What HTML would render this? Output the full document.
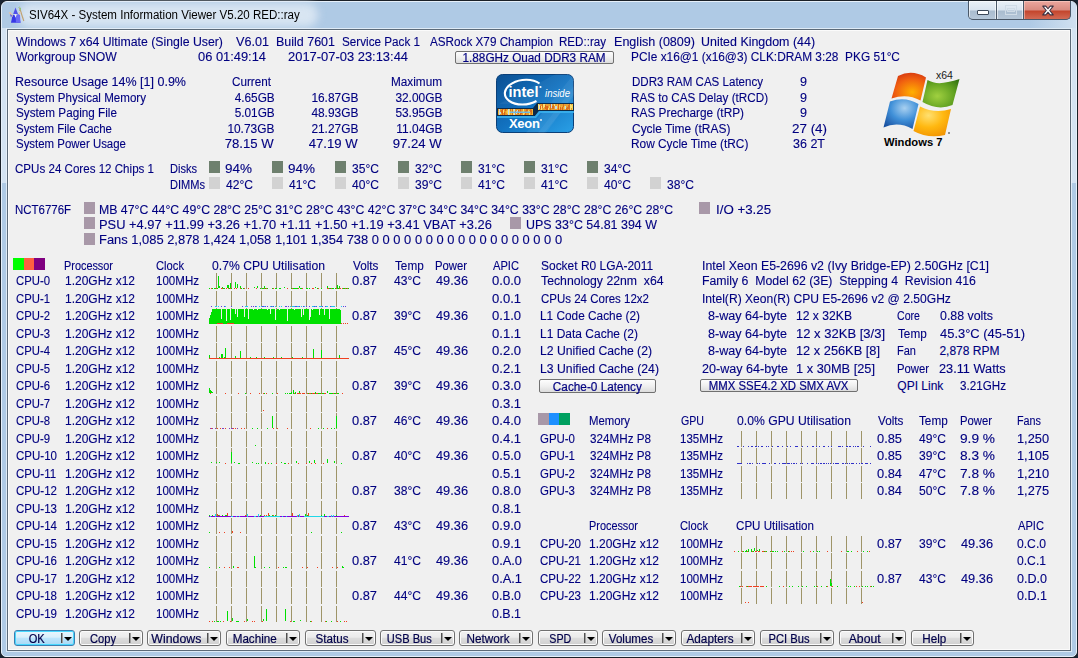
<!DOCTYPE html><html><head><meta charset="utf-8"><style>
*{margin:0;padding:0;box-sizing:border-box}
html,body{width:1078px;height:658px;overflow:hidden;background:#1a2432}
body{position:relative;font-family:"Liberation Sans",sans-serif}
.win{position:absolute;left:0;top:0;width:1078px;height:658px;border-radius:7px 7px 6px 6px;background:#1a2028}
.frame{position:absolute;left:1px;top:1px;width:1076px;height:656px;border-radius:6px 6px 5px 5px;background:#afcae5;border:1px solid #e6f0fa}
.rgl{position:absolute;left:1030px;top:2px;width:46px;height:26px;border-top-right-radius:5px;background:linear-gradient(90deg,rgba(210,226,242,0),#d0e0f0)}
.glow{position:absolute;left:18px;top:3px;width:300px;height:24px;border-radius:12px;background:#d8e5f2;filter:blur(4px)}
.title{position:absolute;left:29px;top:8px;transform:scaleX(0.963);transform-origin:0 0;font:12px/14px "Liberation Sans",sans-serif;color:#000;white-space:pre}
.panel{position:absolute;left:7px;top:29px;width:1064px;height:622px;border:1px solid #5c6a78;background:#f0f0f0;box-shadow:0 0 0 1px rgba(235,243,250,.8)}
.panel:before{content:"";position:absolute;left:0;top:0;right:0;bottom:0;border:1px solid #fbfbfb;border-right-color:#f8f8f8}
.t{position:absolute;font:12px/14px "Liberation Sans",sans-serif;color:#000080;-webkit-text-stroke:0.12px #000080;white-space:pre;transform-origin:0 0}
.bx{position:absolute;width:11px;height:12px}
.btn{position:absolute;top:630px;height:16px;border:1px solid #707070;border-radius:3px;
 background:linear-gradient(#f2f2f2 0,#ebebeb 45%,#dddddd 50%,#cfcfcf 100%);box-shadow:inset 0 0 0 1px #fcfcfc}
.btn.ok{border-color:#3c7fb1;background:linear-gradient(#eaf6fd 0,#d9f0fc 45%,#bee6fd 50%,#a7d9f5 100%);box-shadow:inset 0 0 0 1px #48d8ff}
.bl{position:absolute;left:0;top:1px;height:14px;text-align:center;font:12px/15px "Liberation Sans",sans-serif;color:#00004a;-webkit-text-stroke:0.2px #00004a;white-space:pre}
.sep{position:absolute;right:12px;top:2px;width:1px;height:10px;background:#505050;box-shadow:1px 0 0 #a0a0a0}
.tri{position:absolute;right:2px;top:6px;width:0;height:0;border-left:4px solid transparent;border-right:4px solid transparent;border-top:4px solid #000}
.pb{position:absolute;border:1px solid #707070;border-radius:2px;background:linear-gradient(#fdfdfd 0,#f0f0f0 50%,#dcdcdc 100%);
 text-align:center;font-family:"Liberation Sans",sans-serif;font-size:12px;color:#000080;-webkit-text-stroke:0.2px #000080;white-space:pre}
.wb{position:absolute;top:0;height:20px}
</style></head><body>
<div class="win"><div class="frame"></div></div>
<div style="position:absolute;left:2px;top:28px;width:5px;height:155px;background:#d4e3f2"></div>
<div style="position:absolute;left:1071px;top:28px;width:5px;height:155px;background:#d4e3f2"></div>
<div class="rgl"></div><div class="glow"></div>
<div class="title">SIV64X - System Information Viewer V5.20 RED::ray</div>
<div class="panel"></div>
<!-- window buttons -->
<div style="position:absolute;left:968px;top:1px;width:103px;height:19px;border:1px solid #4a5868;border-top:none;border-radius:0 0 5px 5px;overflow:hidden;background:#4a5868">
 <div style="position:absolute;left:0;top:0;width:27px;height:20px;border-radius:0 0 0 4px;background:linear-gradient(#e9f0f7 0,#d9e4ef 45%,#a9bccf 50%,#b9cadb 100%);box-shadow:inset 0 0 0 1px rgba(255,255,255,.6)"></div>
 <div style="position:absolute;left:28px;top:0;width:26px;height:20px;background:linear-gradient(#e9f0f7 0,#d9e4ef 45%,#a9bccf 50%,#b9cadb 100%);box-shadow:inset 0 0 0 1px rgba(255,255,255,.6)"></div>
 <div style="position:absolute;left:55px;top:0;width:47px;height:20px;border-radius:0 0 4px 0;background:linear-gradient(#eba79e 0,#d98b80 45%,#c3452c 50%,#d6735f 100%);box-shadow:inset 0 0 0 1px rgba(255,220,210,.5)"></div>
</div>
<div style="position:absolute;left:977px;top:10px;width:12px;height:5px;background:#fff;border:1px solid #3c4858;border-radius:1px"></div>
<div style="position:absolute;left:1005px;top:5px;width:12px;height:10px;border:1px solid #cfdbe6;background:transparent"></div>
<div style="position:absolute;left:1007px;top:8px;width:8px;height:4px;border:1px solid #cfdbe6"></div>
<svg style="position:absolute;left:1041px;top:4.5px" width="14" height="11" viewBox="0 0 16 12">
 <path d="M2 1 L5.5 1 L8 4 L10.5 1 L14 1 L10 6 L14 11 L10.5 11 L8 8 L5.5 11 L2 11 L6 6 Z" fill="#fff" stroke="#3a3040" stroke-width="1.2" stroke-linejoin="round"/>
</svg>
<!-- wizard icon -->
<svg style="position:absolute;left:0;top:0" width="30" height="30" viewBox="0 0 30 30">
 <path d="M19.6 8 L23.8 21" stroke="#c0a070" stroke-width="1.1"/>
 <path d="M18.5 7.5 Q19.5 6.5 20.5 8 Q20.5 10 19.5 11" stroke="#90c878" stroke-width="1" fill="none"/>
 <path d="M15.5 7.5 L13.2 14 L18 14 Z" fill="#5050e8"/>
 <path d="M12.5 15 L19 14.5 L20.5 22.8 L11 22.8 Z" fill="#3838e6"/>
 <path d="M15.5 15 L20 14.5 L20.5 22.8 L16 22.8 Z" fill="#6868f4"/>
 <path d="M14.2 14.2 L16.8 14.2 L15.5 17.8 Z" fill="#f4f4f4"/>
 <path d="M8.5 12.5 L10.5 12 L13 16 L12 17 Z" fill="#e2c2a8"/>
 <path d="M12 15.5 L10 14 L11 17.5 Z" fill="#5050e8"/>
 <path d="M18.5 13 L20 11.5 L20.8 12.5 L19.5 15 Z" fill="#e2c2a8"/>
</svg>
<!-- intel logo -->
<svg style="position:absolute;left:496px;top:74px" width="78" height="59" viewBox="0 0 78 59">
 <defs>
  <linearGradient id="ig" x1="0" y1="0" x2="1" y2="1">
   <stop offset="0" stop-color="#0b4f92"/><stop offset="0.5" stop-color="#1272c0"/><stop offset="1" stop-color="#2aa0e6"/>
  </linearGradient>
 </defs>
 <rect x="0.5" y="0.5" width="77" height="58" rx="6" fill="url(#ig)" stroke="#0a3f78"/>
 <path d="M3 30 L78 30 L78 0 L60 0 Z" fill="#ffffff" opacity="0.05"/>
 <path d="M78 0 L30 59 L50 59 L78 20 Z" fill="#ffffff" opacity="0.06"/>
 <path d="M78 12 L42 59 L48 59 L78 22 Z" fill="#ffffff" opacity="0.05"/>
 <path d="M43.5 9.5 A19.5 12.3 -6 1 0 40.5 27" fill="none" stroke="#fff" stroke-width="2.1"/>
 <text x="12.5" y="22.7" font-family="Liberation Sans" font-weight="bold" font-size="14" fill="#fff" textLength="30" lengthAdjust="spacingAndGlyphs">intel</text>
 <circle cx="44.5" cy="13" r="1.1" fill="#fff"/>
 <text x="49" y="22.7" font-family="Liberation Sans" font-style="italic" font-size="10.5" fill="#fff" textLength="25" lengthAdjust="spacingAndGlyphs">inside</text>
 <path d="M1 34 L37 34 L41 29 L78 29 L78 37 L43 37 L39 42 L1 42 Z" fill="#0c2a48"/>
 <path d="M2 35 L37 35 L37 41 L2 41 Z" fill="#e89a28"/>
 <path d="M42 30 L77 30 L77 36 L42 36 Z" fill="#e8a030"/>
 <rect x="2" y="37" width="1" height="3" fill="#f0b838"/>
 <rect x="3" y="35" width="1" height="6" fill="#c8d8e0"/>
 <rect x="4" y="38" width="1" height="2" fill="#c8d8e0"/>
 <rect x="5" y="36" width="1" height="3" fill="#d87020"/>
 <rect x="6" y="35" width="1" height="6" fill="#e06018"/>
 <rect x="7" y="36" width="1" height="3" fill="#f8e070"/>
 <rect x="8" y="38" width="1" height="3" fill="#e06018"/>
 <rect x="9" y="35" width="1" height="2" fill="#e06018"/>
 <rect x="10" y="37" width="1" height="2" fill="#f0b838"/>
 <rect x="11" y="36" width="1" height="4" fill="#f8d050"/>
 <rect x="12" y="35" width="1" height="6" fill="#c8d8e0"/>
 <rect x="13" y="35" width="1" height="6" fill="#f8e070"/>
 <rect x="14" y="35" width="1" height="2" fill="#d87020"/>
 <rect x="15" y="35" width="1" height="6" fill="#f0b838"/>
 <rect x="16" y="35" width="1" height="6" fill="#d87020"/>
 <rect x="17" y="35" width="1" height="6" fill="#f8e070"/>
 <rect x="18" y="35" width="1" height="6" fill="#c8d8e0"/>
 <rect x="19" y="37" width="1" height="2" fill="#d87020"/>
 <rect x="20" y="37" width="1" height="3" fill="#c8d8e0"/>
 <rect x="21" y="36" width="1" height="2" fill="#c8d8e0"/>
 <rect x="22" y="36" width="1" height="4" fill="#e06018"/>
 <rect x="23" y="38" width="1" height="2" fill="#f8d050"/>
 <rect x="24" y="35" width="1" height="6" fill="#e06018"/>
 <rect x="25" y="38" width="1" height="2" fill="#d87020"/>
 <rect x="26" y="37" width="1" height="2" fill="#f0b838"/>
 <rect x="27" y="35" width="1" height="6" fill="#f8e070"/>
 <rect x="28" y="38" width="1" height="2" fill="#f8d050"/>
 <rect x="29" y="37" width="1" height="4" fill="#e06018"/>
 <rect x="30" y="35" width="1" height="3" fill="#d87020"/>
 <rect x="31" y="35" width="1" height="2" fill="#d87020"/>
 <rect x="32" y="36" width="1" height="2" fill="#f8d050"/>
 <rect x="33" y="37" width="1" height="4" fill="#f8e070"/>
 <rect x="34" y="35" width="1" height="3" fill="#d87020"/>
 <rect x="35" y="36" width="1" height="4" fill="#d87020"/>
 <rect x="36" y="35" width="1" height="6" fill="#f0b838"/>
 <rect x="42" y="30" width="1" height="6" fill="#f8e070"/>
 <rect x="43" y="31" width="1" height="4" fill="#c8d8e0"/>
 <rect x="44" y="32" width="1" height="3" fill="#e06018"/>
 <rect x="45" y="32" width="1" height="4" fill="#f8e070"/>
 <rect x="46" y="30" width="1" height="4" fill="#d87020"/>
 <rect x="47" y="30" width="1" height="4" fill="#f8e070"/>
 <rect x="48" y="30" width="1" height="3" fill="#f8e070"/>
 <rect x="49" y="31" width="1" height="4" fill="#e06018"/>
 <rect x="50" y="32" width="1" height="4" fill="#d87020"/>
 <rect x="51" y="32" width="1" height="4" fill="#e06018"/>
 <rect x="52" y="34" width="1" height="2" fill="#f8e070"/>
 <rect x="53" y="32" width="1" height="2" fill="#f8d050"/>
 <rect x="54" y="30" width="1" height="6" fill="#d87020"/>
 <rect x="55" y="30" width="1" height="4" fill="#c8d8e0"/>
 <rect x="56" y="32" width="1" height="3" fill="#d87020"/>
 <rect x="57" y="31" width="1" height="4" fill="#d87020"/>
 <rect x="58" y="30" width="1" height="2" fill="#f8e070"/>
 <rect x="59" y="32" width="1" height="3" fill="#c8d8e0"/>
 <rect x="60" y="32" width="1" height="3" fill="#c8d8e0"/>
 <rect x="61" y="30" width="1" height="4" fill="#f0b838"/>
 <rect x="62" y="30" width="1" height="6" fill="#e06018"/>
 <rect x="63" y="31" width="1" height="4" fill="#f8d050"/>
 <rect x="64" y="33" width="1" height="3" fill="#e06018"/>
 <rect x="65" y="32" width="1" height="2" fill="#f0b838"/>
 <rect x="66" y="33" width="1" height="3" fill="#e06018"/>
 <rect x="67" y="30" width="1" height="3" fill="#d87020"/>
 <rect x="68" y="32" width="1" height="3" fill="#f8d050"/>
 <rect x="69" y="32" width="1" height="3" fill="#c8d8e0"/>
 <rect x="70" y="34" width="1" height="2" fill="#d87020"/>
 <rect x="71" y="33" width="1" height="3" fill="#d87020"/>
 <rect x="72" y="31" width="1" height="4" fill="#d87020"/>
 <rect x="73" y="30" width="1" height="6" fill="#d87020"/>
 <rect x="74" y="30" width="1" height="6" fill="#f8e070"/>
 <rect x="75" y="31" width="1" height="3" fill="#f8e070"/>
 <rect x="76" y="30" width="1" height="6" fill="#f8d050"/>
 <path d="M14 37.5 h20 v1.5 h-20z" fill="#70b8e0"/>
 <path d="M1 42 L39 42 L43 37 L78 37 L78 39 L44 39 L40 44 L1 44 Z" fill="#3cb4f0" opacity="0.8"/>
 <text x="13" y="54" font-family="Liberation Sans" font-weight="bold" font-size="13" fill="#fff" letter-spacing="-0.3">Xeon</text>
 <circle cx="45" cy="46" r="0.9" fill="#fff"/>
</svg>
<!-- windows logo -->
<svg style="position:absolute;left:880px;top:68px" width="90" height="82" viewBox="0 0 90 82">
 <defs>
  <radialGradient id="wr" cx="0.6" cy="0.7" r="0.8"><stop offset="0" stop-color="#ffb000"/><stop offset="0.6" stop-color="#f06010"/><stop offset="1" stop-color="#d03010"/></radialGradient>
  <radialGradient id="wg" cx="0.4" cy="0.6" r="0.8"><stop offset="0" stop-color="#a0d040"/><stop offset="0.6" stop-color="#60a020"/><stop offset="1" stop-color="#307010"/></radialGradient>
  <radialGradient id="wb" cx="0.6" cy="0.3" r="0.8"><stop offset="0" stop-color="#a8d0f0"/><stop offset="0.5" stop-color="#4090d8"/><stop offset="1" stop-color="#1850a0"/></radialGradient>
  <radialGradient id="wy" cx="0.4" cy="0.3" r="0.8"><stop offset="0" stop-color="#ffe070"/><stop offset="0.5" stop-color="#ffb810"/><stop offset="1" stop-color="#f09000"/></radialGradient>
 </defs>
 <path d="M18 8 Q32 1 46 9.5 L40.5 32.5 Q27 25 11.5 30.5 Z" fill="url(#wr)"/>
 <path d="M47.5 12 Q56 17 68 14 Q74 13 79.5 11 L72.5 37 Q58 43 42.5 34 Z" fill="url(#wg)"/>
 <path d="M10 33.5 Q25 28 38.5 36 L32.5 61 Q18 53 3.5 59.5 Z" fill="url(#wb)"/>
 <path d="M40 38.5 Q55 46 71 41 L65 67 Q48 71 33.5 63 Z" fill="url(#wy)"/>
 <circle cx="69" cy="65" r="1" fill="#707070"/>
 <text x="56" y="10.5" font-family="Liberation Sans" font-size="10.5" fill="#202020">x64</text>
 <text x="4" y="78" font-family="Liberation Sans" font-weight="bold" font-size="11" fill="#000" textLength="58.5" lengthAdjust="spacingAndGlyphs">Windows 7</text>
</svg>

<div class="bx" style="left:209px;top:161px;background:#6e806e"></div><div class="bx" style="left:272px;top:161px;background:#6e806e"></div><div class="bx" style="left:335px;top:161px;background:#6e806e"></div><div class="bx" style="left:398px;top:161px;background:#6e806e"></div><div class="bx" style="left:461px;top:161px;background:#6e806e"></div><div class="bx" style="left:524px;top:161px;background:#6e806e"></div><div class="bx" style="left:587px;top:161px;background:#6e806e"></div><div class="bx" style="left:209px;top:177px;background:#d2d2d2"></div><div class="bx" style="left:272px;top:177px;background:#d2d2d2"></div><div class="bx" style="left:335px;top:177px;background:#d2d2d2"></div><div class="bx" style="left:398px;top:177px;background:#d2d2d2"></div><div class="bx" style="left:461px;top:177px;background:#d2d2d2"></div><div class="bx" style="left:524px;top:177px;background:#d2d2d2"></div><div class="bx" style="left:587px;top:177px;background:#d2d2d2"></div><div class="bx" style="left:650px;top:177px;background:#d2d2d2"></div><div class="bx" style="left:84px;top:202px;background:#a898a8"></div><div class="bx" style="left:84px;top:217px;background:#a898a8"></div><div class="bx" style="left:84px;top:233px;background:#a898a8"></div><div class="bx" style="left:699px;top:202px;background:#a898a8"></div><div class="bx" style="left:510px;top:217px;background:#a898a8"></div><div style="position:absolute;left:13px;top:258px;width:11px;height:12px;background:#00ff00"></div><div style="position:absolute;left:24px;top:258px;width:10px;height:12px;background:#ff6040"></div><div style="position:absolute;left:34px;top:258px;width:11px;height:12px;background:#800080"></div><div style="position:absolute;left:538px;top:413px;width:11px;height:12px;background:#a898a8"></div><div style="position:absolute;left:549px;top:413px;width:10px;height:12px;background:#1e90ff"></div><div style="position:absolute;left:559px;top:413px;width:11px;height:12px;background:#00a060"></div><div class="t" style="left:15.9px;top:35px;transform:scaleX(1.024)">Windows 7 x64 Ultimate (Single User)</div><div class="t" style="left:235.9px;top:35px;transform:scaleX(1.052)">V6.01</div><div class="t" style="left:276.0px;top:35px;transform:scaleX(1.040)">Build 7601</div><div class="t" style="left:341.5px;top:35px;transform:scaleX(0.975)">Service Pack 1</div><div class="t" style="left:429.5px;top:35px;transform:scaleX(0.976)">ASRock X79 Champion</div><div class="t" style="left:559.4px;top:35px;transform:scaleX(0.966)">RED::ray</div><div class="t" style="left:613.5px;top:35px;transform:scaleX(1.047)">English (0809)</div><div class="t" style="left:700.8px;top:35px;transform:scaleX(1.036)">United Kingdom (44)</div><div class="t" style="left:15.9px;top:50px;transform:scaleX(1.017)">Workgroup SNOW</div><div class="t" style="left:198.2px;top:50px;transform:scaleX(1.073)">06 01:49:14</div><div class="t" style="left:288.4px;top:50px;transform:scaleX(1.077)">2017-07-03 23:13:44</div><div class="t" style="left:631.4px;top:50px;transform:scaleX(0.989)">PCIe x16@1 (x16@3) CLK:DRAM 3:28  PKG 51°C</div><div class="t" style="left:15.0px;top:75px;transform:scaleX(1.042)">Resource Usage 14% [1] 0.9%</div><div class="t" style="left:232.4px;top:75px;transform:scaleX(0.975)">Current</div><div class="t" style="left:391.0px;top:75px;transform:scaleX(0.981)">Maximum</div><div class="t" style="left:15.5px;top:91px;transform:scaleX(0.965)">System Physical Memory</div><div class="t" style="right:803.7px;top:91px;transform:scaleX(0.983);transform-origin:100% 0">4.65GB</div><div class="t" style="right:719.7px;top:91px;transform:scaleX(0.992);transform-origin:100% 0">16.87GB</div><div class="t" style="right:635.4px;top:91px;transform:scaleX(0.992);transform-origin:100% 0">32.00GB</div><div class="t" style="left:15.5px;top:106px;transform:scaleX(0.977)">System Paging File</div><div class="t" style="right:803.7px;top:106px;transform:scaleX(0.983);transform-origin:100% 0">5.01GB</div><div class="t" style="right:719.7px;top:106px;transform:scaleX(0.992);transform-origin:100% 0">48.93GB</div><div class="t" style="right:635.4px;top:106px;transform:scaleX(0.992);transform-origin:100% 0">53.95GB</div><div class="t" style="left:15.5px;top:122px;transform:scaleX(0.953)">System File Cache</div><div class="t" style="right:803.7px;top:122px;transform:scaleX(0.992);transform-origin:100% 0">10.73GB</div><div class="t" style="right:719.7px;top:122px;transform:scaleX(0.992);transform-origin:100% 0">21.27GB</div><div class="t" style="right:635.4px;top:122px;transform:scaleX(0.992);transform-origin:100% 0">11.04GB</div><div class="t" style="left:15.5px;top:137px;transform:scaleX(0.953)">System Power Usage</div><div class="t" style="right:804.3px;top:137px;transform:scaleX(1.096);transform-origin:100% 0">78.15 W</div><div class="t" style="right:720.3px;top:137px;transform:scaleX(1.096);transform-origin:100% 0">47.19 W</div><div class="t" style="right:636.0px;top:137px;transform:scaleX(1.096);transform-origin:100% 0">97.24 W</div><div class="t" style="left:631.5px;top:75px;transform:scaleX(0.963)">DDR3 RAM CAS Latency</div><div class="t" style="left:799.8px;top:75px;transform:scaleX(1.049)">9</div><div class="t" style="left:631.4px;top:91px;transform:scaleX(0.974)">RAS to CAS Delay (tRCD)</div><div class="t" style="left:799.8px;top:91px;transform:scaleX(1.049)">9</div><div class="t" style="left:631.4px;top:106px;transform:scaleX(0.985)">RAS Precharge (tRP)</div><div class="t" style="left:799.8px;top:106px;transform:scaleX(1.049)">9</div><div class="t" style="left:631.8px;top:122px;transform:scaleX(0.997)">Cycle Time (tRAS)</div><div class="t" style="left:792.3px;top:122px;transform:scaleX(1.117)">27 (4)</div><div class="t" style="left:631.4px;top:137px;transform:scaleX(0.989)">Row Cycle Time (tRC)</div><div class="t" style="left:792.5px;top:137px;transform:scaleX(1.043)">36 2T</div><div class="t" style="left:15.4px;top:162px;transform:scaleX(0.965)">CPUs 24 Cores 12 Chips 1</div><div class="t" style="left:169.6px;top:162px;transform:scaleX(0.920)">Disks</div><div class="t" style="left:169.6px;top:178px;transform:scaleX(0.921)">DIMMs</div><div class="t" style="left:225.4px;top:162px;transform:scaleX(1.124)">94%</div><div class="t" style="left:288.4px;top:162px;transform:scaleX(1.124)">94%</div><div class="t" style="left:351.5px;top:162px;transform:scaleX(1.007)">35°C</div><div class="t" style="left:414.5px;top:162px;transform:scaleX(1.007)">32°C</div><div class="t" style="left:477.5px;top:162px;transform:scaleX(1.007)">31°C</div><div class="t" style="left:540.5px;top:162px;transform:scaleX(1.007)">31°C</div><div class="t" style="left:603.5px;top:162px;transform:scaleX(1.007)">34°C</div><div class="t" style="left:225.7px;top:178px;transform:scaleX(1.007)">42°C</div><div class="t" style="left:288.7px;top:178px;transform:scaleX(1.007)">41°C</div><div class="t" style="left:351.7px;top:178px;transform:scaleX(1.007)">40°C</div><div class="t" style="left:414.5px;top:178px;transform:scaleX(1.007)">39°C</div><div class="t" style="left:477.7px;top:178px;transform:scaleX(1.007)">41°C</div><div class="t" style="left:540.7px;top:178px;transform:scaleX(1.007)">41°C</div><div class="t" style="left:603.7px;top:178px;transform:scaleX(1.007)">40°C</div><div class="t" style="left:666.5px;top:178px;transform:scaleX(1.007)">38°C</div><div class="t" style="left:15.1px;top:203px;transform:scaleX(0.954)">NCT6776F</div><div class="t" style="left:99.0px;top:203px;transform:scaleX(1.024)">MB 47°C 44°C 49°C 28°C 25°C 31°C 28°C 43°C 42°C 37°C 34°C 34°C 34°C 33°C 28°C 28°C 26°C 28°C</div><div class="t" style="left:715.5px;top:203px;transform:scaleX(1.107)">I/O +3.25</div><div class="t" style="left:98.9px;top:218px;transform:scaleX(1.072)">PSU +4.97 +11.99 +3.26 +1.70 +1.11 +1.50 +1.19 +3.41 VBAT +3.26</div><div class="t" style="left:526.0px;top:218px;transform:scaleX(1.038)">UPS 33°C 54.81 394 W</div><div class="t" style="left:98.9px;top:233px;transform:scaleX(1.076)">Fans 1,085 2,878 1,424 1,058 1,101 1,354 738 0 0 0 0 0 0 0 0 0 0 0 0 0 0 0 0 0 0</div><div class="t" style="left:64.4px;top:259px;transform:scaleX(0.907)">Processor</div><div class="t" style="left:155.8px;top:259px;transform:scaleX(0.933)">Clock</div><div class="t" style="left:212.1px;top:259px;transform:scaleX(1.015)">0.7% CPU Utilisation</div><div class="t" style="left:352.6px;top:259px;transform:scaleX(0.975)">Volts</div><div class="t" style="left:394.7px;top:259px;transform:scaleX(0.978)">Temp</div><div class="t" style="left:435.1px;top:259px;transform:scaleX(0.941)">Power</div><div class="t" style="left:492.6px;top:259px;transform:scaleX(0.928)">APIC</div><div class="t" style="left:540.9px;top:259px;transform:scaleX(0.997)">Socket R0 LGA-2011</div><div class="t" style="left:701.5px;top:259px;transform:scaleX(1.027)">Intel Xeon E5-2696 v2 (Ivy Bridge-EP) 2.50GHz [C1]</div><div class="t" style="left:15.9px;top:274px;transform:scaleX(0.944)">CPU-0</div><div class="t" style="left:64.6px;top:274px;transform:scaleX(0.999)">1.20GHz x12</div><div class="t" style="left:155.5px;top:274px;transform:scaleX(0.962)">100MHz</div><div class="t" style="left:352.2px;top:274px;transform:scaleX(1.070)">0.87</div><div class="t" style="left:393.7px;top:274px;transform:scaleX(1.007)">43°C</div><div class="t" style="left:435.7px;top:274px;transform:scaleX(1.066)">49.36</div><div class="t" style="left:492.1px;top:274px;transform:scaleX(1.087)">0.0.0</div><div class="t" style="left:15.9px;top:292px;transform:scaleX(0.944)">CPU-1</div><div class="t" style="left:64.6px;top:292px;transform:scaleX(0.999)">1.20GHz x12</div><div class="t" style="left:155.5px;top:292px;transform:scaleX(0.962)">100MHz</div><div class="t" style="left:492.1px;top:292px;transform:scaleX(1.087)">0.0.1</div><div class="t" style="left:15.9px;top:309px;transform:scaleX(0.944)">CPU-2</div><div class="t" style="left:64.6px;top:309px;transform:scaleX(0.999)">1.20GHz x12</div><div class="t" style="left:155.5px;top:309px;transform:scaleX(0.962)">100MHz</div><div class="t" style="left:352.2px;top:309px;transform:scaleX(1.070)">0.87</div><div class="t" style="left:393.5px;top:309px;transform:scaleX(1.007)">39°C</div><div class="t" style="left:435.7px;top:309px;transform:scaleX(1.066)">49.36</div><div class="t" style="left:492.1px;top:309px;transform:scaleX(1.087)">0.1.0</div><div class="t" style="left:15.9px;top:327px;transform:scaleX(0.944)">CPU-3</div><div class="t" style="left:64.6px;top:327px;transform:scaleX(0.999)">1.20GHz x12</div><div class="t" style="left:155.5px;top:327px;transform:scaleX(0.962)">100MHz</div><div class="t" style="left:492.1px;top:327px;transform:scaleX(1.087)">0.1.1</div><div class="t" style="left:15.9px;top:344px;transform:scaleX(0.944)">CPU-4</div><div class="t" style="left:64.6px;top:344px;transform:scaleX(0.999)">1.20GHz x12</div><div class="t" style="left:155.5px;top:344px;transform:scaleX(0.962)">100MHz</div><div class="t" style="left:352.2px;top:344px;transform:scaleX(1.070)">0.87</div><div class="t" style="left:393.7px;top:344px;transform:scaleX(1.007)">45°C</div><div class="t" style="left:435.7px;top:344px;transform:scaleX(1.066)">49.36</div><div class="t" style="left:492.1px;top:344px;transform:scaleX(1.087)">0.2.0</div><div class="t" style="left:15.9px;top:362px;transform:scaleX(0.944)">CPU-5</div><div class="t" style="left:64.6px;top:362px;transform:scaleX(0.999)">1.20GHz x12</div><div class="t" style="left:155.5px;top:362px;transform:scaleX(0.962)">100MHz</div><div class="t" style="left:492.1px;top:362px;transform:scaleX(1.087)">0.2.1</div><div class="t" style="left:15.9px;top:379px;transform:scaleX(0.944)">CPU-6</div><div class="t" style="left:64.6px;top:379px;transform:scaleX(0.999)">1.20GHz x12</div><div class="t" style="left:155.5px;top:379px;transform:scaleX(0.962)">100MHz</div><div class="t" style="left:352.2px;top:379px;transform:scaleX(1.070)">0.87</div><div class="t" style="left:393.5px;top:379px;transform:scaleX(1.007)">39°C</div><div class="t" style="left:435.7px;top:379px;transform:scaleX(1.066)">49.36</div><div class="t" style="left:492.1px;top:379px;transform:scaleX(1.087)">0.3.0</div><div class="t" style="left:15.9px;top:397px;transform:scaleX(0.944)">CPU-7</div><div class="t" style="left:64.6px;top:397px;transform:scaleX(0.999)">1.20GHz x12</div><div class="t" style="left:155.5px;top:397px;transform:scaleX(0.962)">100MHz</div><div class="t" style="left:492.1px;top:397px;transform:scaleX(1.087)">0.3.1</div><div class="t" style="left:15.9px;top:414px;transform:scaleX(0.944)">CPU-8</div><div class="t" style="left:64.6px;top:414px;transform:scaleX(0.999)">1.20GHz x12</div><div class="t" style="left:155.5px;top:414px;transform:scaleX(0.962)">100MHz</div><div class="t" style="left:352.2px;top:414px;transform:scaleX(1.070)">0.87</div><div class="t" style="left:393.7px;top:414px;transform:scaleX(1.007)">46°C</div><div class="t" style="left:435.7px;top:414px;transform:scaleX(1.066)">49.36</div><div class="t" style="left:492.1px;top:414px;transform:scaleX(1.087)">0.4.0</div><div class="t" style="left:15.9px;top:432px;transform:scaleX(0.944)">CPU-9</div><div class="t" style="left:64.6px;top:432px;transform:scaleX(0.999)">1.20GHz x12</div><div class="t" style="left:155.5px;top:432px;transform:scaleX(0.962)">100MHz</div><div class="t" style="left:492.1px;top:432px;transform:scaleX(1.087)">0.4.1</div><div class="t" style="left:15.9px;top:449px;transform:scaleX(0.961)">CPU-10</div><div class="t" style="left:64.6px;top:449px;transform:scaleX(0.999)">1.20GHz x12</div><div class="t" style="left:155.5px;top:449px;transform:scaleX(0.962)">100MHz</div><div class="t" style="left:352.2px;top:449px;transform:scaleX(1.070)">0.87</div><div class="t" style="left:393.7px;top:449px;transform:scaleX(1.007)">40°C</div><div class="t" style="left:435.7px;top:449px;transform:scaleX(1.066)">49.36</div><div class="t" style="left:492.1px;top:449px;transform:scaleX(1.087)">0.5.0</div><div class="t" style="left:15.9px;top:467px;transform:scaleX(0.961)">CPU-11</div><div class="t" style="left:64.6px;top:467px;transform:scaleX(0.999)">1.20GHz x12</div><div class="t" style="left:155.5px;top:467px;transform:scaleX(0.962)">100MHz</div><div class="t" style="left:492.1px;top:467px;transform:scaleX(1.087)">0.5.1</div><div class="t" style="left:15.9px;top:484px;transform:scaleX(0.961)">CPU-12</div><div class="t" style="left:64.6px;top:484px;transform:scaleX(0.999)">1.20GHz x12</div><div class="t" style="left:155.5px;top:484px;transform:scaleX(0.962)">100MHz</div><div class="t" style="left:352.2px;top:484px;transform:scaleX(1.070)">0.87</div><div class="t" style="left:393.5px;top:484px;transform:scaleX(1.007)">38°C</div><div class="t" style="left:435.7px;top:484px;transform:scaleX(1.066)">49.36</div><div class="t" style="left:492.1px;top:484px;transform:scaleX(1.087)">0.8.0</div><div class="t" style="left:15.9px;top:502px;transform:scaleX(0.961)">CPU-13</div><div class="t" style="left:64.6px;top:502px;transform:scaleX(0.999)">1.20GHz x12</div><div class="t" style="left:155.5px;top:502px;transform:scaleX(0.962)">100MHz</div><div class="t" style="left:492.1px;top:502px;transform:scaleX(1.087)">0.8.1</div><div class="t" style="left:15.9px;top:519px;transform:scaleX(0.961)">CPU-14</div><div class="t" style="left:64.6px;top:519px;transform:scaleX(0.999)">1.20GHz x12</div><div class="t" style="left:155.5px;top:519px;transform:scaleX(0.962)">100MHz</div><div class="t" style="left:352.2px;top:519px;transform:scaleX(1.070)">0.87</div><div class="t" style="left:393.7px;top:519px;transform:scaleX(1.007)">43°C</div><div class="t" style="left:435.7px;top:519px;transform:scaleX(1.066)">49.36</div><div class="t" style="left:492.1px;top:519px;transform:scaleX(1.087)">0.9.0</div><div class="t" style="left:15.9px;top:537px;transform:scaleX(0.961)">CPU-15</div><div class="t" style="left:64.6px;top:537px;transform:scaleX(0.999)">1.20GHz x12</div><div class="t" style="left:155.5px;top:537px;transform:scaleX(0.962)">100MHz</div><div class="t" style="left:492.1px;top:537px;transform:scaleX(1.087)">0.9.1</div><div class="t" style="left:15.9px;top:554px;transform:scaleX(0.961)">CPU-16</div><div class="t" style="left:64.6px;top:554px;transform:scaleX(0.999)">1.20GHz x12</div><div class="t" style="left:155.5px;top:554px;transform:scaleX(0.962)">100MHz</div><div class="t" style="left:352.2px;top:554px;transform:scaleX(1.070)">0.87</div><div class="t" style="left:393.7px;top:554px;transform:scaleX(1.007)">41°C</div><div class="t" style="left:435.7px;top:554px;transform:scaleX(1.066)">49.36</div><div class="t" style="left:492.1px;top:554px;transform:scaleX(1.071)">0.A.0</div><div class="t" style="left:15.9px;top:572px;transform:scaleX(0.961)">CPU-17</div><div class="t" style="left:64.6px;top:572px;transform:scaleX(0.999)">1.20GHz x12</div><div class="t" style="left:155.5px;top:572px;transform:scaleX(0.962)">100MHz</div><div class="t" style="left:492.1px;top:572px;transform:scaleX(1.071)">0.A.1</div><div class="t" style="left:15.9px;top:589px;transform:scaleX(0.961)">CPU-18</div><div class="t" style="left:64.6px;top:589px;transform:scaleX(0.999)">1.20GHz x12</div><div class="t" style="left:155.5px;top:589px;transform:scaleX(0.962)">100MHz</div><div class="t" style="left:352.2px;top:589px;transform:scaleX(1.070)">0.87</div><div class="t" style="left:393.7px;top:589px;transform:scaleX(1.007)">44°C</div><div class="t" style="left:435.7px;top:589px;transform:scaleX(1.066)">49.36</div><div class="t" style="left:492.1px;top:589px;transform:scaleX(1.035)">0.B.0</div><div class="t" style="left:15.9px;top:607px;transform:scaleX(0.961)">CPU-19</div><div class="t" style="left:64.6px;top:607px;transform:scaleX(0.999)">1.20GHz x12</div><div class="t" style="left:155.5px;top:607px;transform:scaleX(0.962)">100MHz</div><div class="t" style="left:492.1px;top:607px;transform:scaleX(1.035)">0.B.1</div><div class="t" style="left:541.1px;top:274px;transform:scaleX(1.021)">Technology 22nm  x64</div><div class="t" style="left:540.8px;top:292px;transform:scaleX(0.958)">CPUs 24 Cores 12x2</div><div class="t" style="left:540.4px;top:309px;transform:scaleX(0.986)">L1 Code Cache (2)</div><div class="t" style="left:540.4px;top:327px;transform:scaleX(0.999)">L1 Data Cache (2)</div><div class="t" style="left:540.4px;top:344px;transform:scaleX(1.018)">L2 Unified Cache (2)</div><div class="t" style="left:540.4px;top:362px;transform:scaleX(1.019)">L3 Unified Cache (24)</div><div class="t" style="left:701.6px;top:274px;transform:scaleX(1.024)">Family 6  Model 62 (3E)  Stepping 4  Revision 416</div><div class="t" style="left:701.5px;top:292px;transform:scaleX(1.008)">Intel(R) Xeon(R) CPU E5-2696 v2 @ 2.50GHz</div><div class="t" style="left:708.2px;top:309px;transform:scaleX(1.048)">8-way 64-byte</div><div class="t" style="left:796.3px;top:309px;transform:scaleX(1.011)">12 x 32KB</div><div class="t" style="left:897.4px;top:309px;transform:scaleX(0.884)">Core</div><div class="t" style="left:939.5px;top:309px;transform:scaleX(1.032)">0.88 volts</div><div class="t" style="left:708.2px;top:327px;transform:scaleX(1.048)">8-way 64-byte</div><div class="t" style="left:796.2px;top:327px;transform:scaleX(1.085)">12 x 32KB [3/3]</div><div class="t" style="left:897.6px;top:327px;transform:scaleX(0.978)">Temp</div><div class="t" style="left:939.7px;top:327px;transform:scaleX(1.078)">45.3°C (45-51)</div><div class="t" style="left:708.2px;top:344px;transform:scaleX(1.048)">8-way 64-byte</div><div class="t" style="left:796.2px;top:344px;transform:scaleX(1.067)">12 x 256KB [8]</div><div class="t" style="left:897.0px;top:344px;transform:scaleX(0.919)">Fan</div><div class="t" style="left:939.4px;top:344px;transform:scaleX(1.000)">2,878 RPM</div><div class="t" style="left:702.0px;top:362px;transform:scaleX(1.048)">20-way 64-byte</div><div class="t" style="left:796.2px;top:362px;transform:scaleX(1.067)">1 x 30MB [25]</div><div class="t" style="left:897.0px;top:362px;transform:scaleX(0.941)">Power</div><div class="t" style="left:939.4px;top:362px;transform:scaleX(1.062)">23.11 Watts</div><div class="t" style="left:897.3px;top:379px;transform:scaleX(1.000)">QPI Link</div><div class="t" style="left:960.1px;top:379px;transform:scaleX(0.971)">3.21GHz</div><div class="t" style="left:589.1px;top:414px;transform:scaleX(0.946)">Memory</div><div class="t" style="left:680.8px;top:414px;transform:scaleX(0.884)">GPU</div><div class="t" style="left:736.5px;top:414px;transform:scaleX(1.017)">0.0% GPU Utilisation</div><div class="t" style="left:877.7px;top:414px;transform:scaleX(0.975)">Volts</div><div class="t" style="left:919.4px;top:414px;transform:scaleX(0.978)">Temp</div><div class="t" style="left:960.3px;top:414px;transform:scaleX(0.941)">Power</div><div class="t" style="left:1016.6px;top:414px;transform:scaleX(0.900)">Fans</div><div class="t" style="left:540.4px;top:432px;transform:scaleX(0.954)">GPU-0</div><div class="t" style="left:589.6px;top:432px;transform:scaleX(0.973)">324MHz P8</div><div class="t" style="left:680.4px;top:432px;transform:scaleX(0.962)">135MHz</div><div class="t" style="left:877.3px;top:432px;transform:scaleX(1.070)">0.85</div><div class="t" style="left:918.7px;top:432px;transform:scaleX(1.007)">49°C</div><div class="t" style="left:960.4px;top:432px;transform:scaleX(1.141)">9.9 %</div><div class="t" style="left:1016.5px;top:432px;transform:scaleX(1.066)">1,250</div><div class="t" style="left:540.4px;top:449px;transform:scaleX(0.954)">GPU-1</div><div class="t" style="left:589.6px;top:449px;transform:scaleX(0.973)">324MHz P8</div><div class="t" style="left:680.4px;top:449px;transform:scaleX(0.962)">135MHz</div><div class="t" style="left:877.3px;top:449px;transform:scaleX(1.070)">0.85</div><div class="t" style="left:918.5px;top:449px;transform:scaleX(1.007)">39°C</div><div class="t" style="left:960.4px;top:449px;transform:scaleX(1.141)">8.3 %</div><div class="t" style="left:1016.5px;top:449px;transform:scaleX(1.066)">1,105</div><div class="t" style="left:540.4px;top:467px;transform:scaleX(0.954)">GPU-2</div><div class="t" style="left:589.6px;top:467px;transform:scaleX(0.973)">324MHz P8</div><div class="t" style="left:680.4px;top:467px;transform:scaleX(0.962)">135MHz</div><div class="t" style="left:877.3px;top:467px;transform:scaleX(1.070)">0.84</div><div class="t" style="left:918.7px;top:467px;transform:scaleX(1.007)">47°C</div><div class="t" style="left:960.3px;top:467px;transform:scaleX(1.141)">7.8 %</div><div class="t" style="left:1016.5px;top:467px;transform:scaleX(1.066)">1,210</div><div class="t" style="left:540.4px;top:484px;transform:scaleX(0.954)">GPU-3</div><div class="t" style="left:589.6px;top:484px;transform:scaleX(0.973)">324MHz P8</div><div class="t" style="left:680.4px;top:484px;transform:scaleX(0.962)">135MHz</div><div class="t" style="left:877.3px;top:484px;transform:scaleX(1.070)">0.84</div><div class="t" style="left:918.5px;top:484px;transform:scaleX(1.007)">50°C</div><div class="t" style="left:960.3px;top:484px;transform:scaleX(1.141)">7.8 %</div><div class="t" style="left:1016.5px;top:484px;transform:scaleX(1.066)">1,275</div><div class="t" style="left:589.1px;top:519px;transform:scaleX(0.907)">Processor</div><div class="t" style="left:680.4px;top:519px;transform:scaleX(0.933)">Clock</div><div class="t" style="left:736.4px;top:519px;transform:scaleX(0.967)">CPU Utilisation</div><div class="t" style="left:1017.5px;top:519px;transform:scaleX(0.928)">APIC</div><div class="t" style="left:540.4px;top:537px;transform:scaleX(0.961)">CPU-20</div><div class="t" style="left:589.1px;top:537px;transform:scaleX(0.999)">1.20GHz x12</div><div class="t" style="left:680.1px;top:537px;transform:scaleX(0.962)">100MHz</div><div class="t" style="left:877.3px;top:537px;transform:scaleX(1.070)">0.87</div><div class="t" style="left:918.5px;top:537px;transform:scaleX(1.007)">39°C</div><div class="t" style="left:960.7px;top:537px;transform:scaleX(1.066)">49.36</div><div class="t" style="left:1017.0px;top:537px;transform:scaleX(1.011)">0.C.0</div><div class="t" style="left:540.4px;top:554px;transform:scaleX(0.961)">CPU-21</div><div class="t" style="left:589.1px;top:554px;transform:scaleX(0.999)">1.20GHz x12</div><div class="t" style="left:680.1px;top:554px;transform:scaleX(0.962)">100MHz</div><div class="t" style="left:1017.0px;top:554px;transform:scaleX(1.011)">0.C.1</div><div class="t" style="left:540.4px;top:572px;transform:scaleX(0.961)">CPU-22</div><div class="t" style="left:589.1px;top:572px;transform:scaleX(0.999)">1.20GHz x12</div><div class="t" style="left:680.1px;top:572px;transform:scaleX(0.962)">100MHz</div><div class="t" style="left:877.3px;top:572px;transform:scaleX(1.070)">0.87</div><div class="t" style="left:918.7px;top:572px;transform:scaleX(1.007)">43°C</div><div class="t" style="left:960.7px;top:572px;transform:scaleX(1.066)">49.36</div><div class="t" style="left:1017.0px;top:572px;transform:scaleX(1.046)">0.D.0</div><div class="t" style="left:540.4px;top:589px;transform:scaleX(0.961)">CPU-23</div><div class="t" style="left:589.1px;top:589px;transform:scaleX(0.999)">1.20GHz x12</div><div class="t" style="left:680.1px;top:589px;transform:scaleX(0.962)">100MHz</div><div class="t" style="left:1017.0px;top:589px;transform:scaleX(1.046)">0.D.1</div><svg style="position:absolute;left:209px;top:272px" width="141" height="351" shape-rendering="crispEdges"><rect x="7" y="1" width="1" height="16" fill="#9e9468"/><rect x="22" y="1" width="1" height="16" fill="#9e9468"/><rect x="37" y="1" width="1" height="16" fill="#9e9468"/><rect x="52" y="1" width="1" height="16" fill="#9e9468"/><rect x="67" y="1" width="1" height="16" fill="#9e9468"/><rect x="82" y="1" width="1" height="16" fill="#9e9468"/><rect x="97" y="1" width="1" height="16" fill="#9e9468"/><rect x="112" y="1" width="1" height="16" fill="#9e9468"/><rect x="127" y="1" width="1" height="16" fill="#9e9468"/><rect x="0" y="16" width="1" height="1" fill="#00e000"/><rect x="2" y="16" width="1" height="1" fill="#f04020"/><rect x="3" y="16" width="1" height="1" fill="#00e000"/><rect x="5" y="16" width="1" height="1" fill="#00e000"/><rect x="6" y="16" width="1" height="1" fill="#00e000"/><rect x="7" y="16" width="1" height="1" fill="#f04020"/><rect x="8" y="16" width="1" height="1" fill="#00e000"/><rect x="12" y="16" width="1" height="1" fill="#f04020"/><rect x="13" y="16" width="1" height="1" fill="#f04020"/><rect x="14" y="16" width="1" height="1" fill="#00e000"/><rect x="15" y="16" width="1" height="1" fill="#00e000"/><rect x="17" y="16" width="1" height="1" fill="#f04020"/><rect x="19" y="16" width="1" height="1" fill="#f04020"/><rect x="20" y="16" width="1" height="1" fill="#00e000"/><rect x="21" y="16" width="1" height="1" fill="#f04020"/><rect x="22" y="16" width="1" height="1" fill="#00e000"/><rect x="25" y="16" width="1" height="1" fill="#f04020"/><rect x="27" y="16" width="1" height="1" fill="#f04020"/><rect x="31" y="16" width="1" height="1" fill="#f04020"/><rect x="32" y="16" width="1" height="1" fill="#00e000"/><rect x="34" y="16" width="1" height="1" fill="#00e000"/><rect x="35" y="16" width="1" height="1" fill="#f04020"/><rect x="39" y="16" width="1" height="1" fill="#f04020"/><rect x="47" y="16" width="1" height="1" fill="#f04020"/><rect x="51" y="16" width="1" height="1" fill="#00e000"/><rect x="53" y="16" width="1" height="1" fill="#00e000"/><rect x="54" y="16" width="1" height="1" fill="#00e000"/><rect x="55" y="16" width="1" height="1" fill="#f04020"/><rect x="56" y="16" width="1" height="1" fill="#00e000"/><rect x="57" y="16" width="1" height="1" fill="#f04020"/><rect x="58" y="16" width="1" height="1" fill="#00e000"/><rect x="63" y="16" width="1" height="1" fill="#00e000"/><rect x="64" y="16" width="1" height="1" fill="#f04020"/><rect x="66" y="16" width="1" height="1" fill="#00e000"/><rect x="67" y="16" width="1" height="1" fill="#00e000"/><rect x="70" y="16" width="1" height="1" fill="#00e000"/><rect x="71" y="16" width="1" height="1" fill="#00e000"/><rect x="78" y="16" width="1" height="1" fill="#f04020"/><rect x="82" y="16" width="1" height="1" fill="#00e000"/><rect x="83" y="16" width="1" height="1" fill="#f04020"/><rect x="84" y="16" width="1" height="1" fill="#00e000"/><rect x="85" y="16" width="1" height="1" fill="#00e000"/><rect x="86" y="16" width="1" height="1" fill="#00e000"/><rect x="87" y="16" width="1" height="1" fill="#00e000"/><rect x="88" y="16" width="1" height="1" fill="#00e000"/><rect x="89" y="16" width="1" height="1" fill="#f04020"/><rect x="91" y="16" width="1" height="1" fill="#00e000"/><rect x="92" y="16" width="1" height="1" fill="#00e000"/><rect x="93" y="16" width="1" height="1" fill="#f04020"/><rect x="97" y="16" width="1" height="1" fill="#00e000"/><rect x="98" y="16" width="1" height="1" fill="#00e000"/><rect x="100" y="16" width="1" height="1" fill="#00e000"/><rect x="103" y="16" width="1" height="1" fill="#f04020"/><rect x="104" y="16" width="1" height="1" fill="#f04020"/><rect x="108" y="16" width="1" height="1" fill="#00e000"/><rect x="109" y="16" width="1" height="1" fill="#f04020"/><rect x="112" y="16" width="1" height="1" fill="#00e000"/><rect x="119" y="16" width="1" height="1" fill="#f04020"/><rect x="120" y="16" width="1" height="1" fill="#00e000"/><rect x="121" y="16" width="1" height="1" fill="#00e000"/><rect x="122" y="16" width="1" height="1" fill="#f04020"/><rect x="124" y="16" width="1" height="1" fill="#f04020"/><rect x="127" y="16" width="1" height="1" fill="#00e000"/><rect x="128" y="16" width="1" height="1" fill="#00e000"/><rect x="129" y="16" width="1" height="1" fill="#f04020"/><rect x="135" y="16" width="1" height="1" fill="#f04020"/><rect x="118" y="16" width="1" height="1" fill="#f04020"/><rect x="119" y="16" width="1" height="1" fill="#f04020"/><rect x="121" y="16" width="1" height="1" fill="#00e000"/><rect x="123" y="16" width="1" height="1" fill="#00e000"/><rect x="124" y="16" width="1" height="1" fill="#00e000"/><rect x="126" y="16" width="1" height="1" fill="#00e000"/><rect x="127" y="16" width="1" height="1" fill="#f04020"/><rect x="128" y="16" width="1" height="1" fill="#00e000"/><rect x="129" y="16" width="1" height="1" fill="#00e000"/><rect x="130" y="16" width="1" height="1" fill="#f04020"/><rect x="131" y="16" width="1" height="1" fill="#f04020"/><rect x="133" y="16" width="1" height="1" fill="#f04020"/><rect x="134" y="16" width="1" height="1" fill="#00e000"/><rect x="135" y="16" width="1" height="1" fill="#00e000"/><rect x="136" y="16" width="1" height="1" fill="#f04020"/><rect x="137" y="16" width="1" height="1" fill="#00e000"/><rect x="138" y="16" width="1" height="1" fill="#f04020"/><rect x="139" y="16" width="1" height="1" fill="#00e000"/><rect x="9" y="4" width="1" height="12" fill="#00e000"/><rect x="10" y="14" width="1" height="2" fill="#00e000"/><rect x="13" y="15" width="1" height="1" fill="#00e000"/><rect x="18" y="13" width="1" height="3" fill="#00e000"/><rect x="19" y="13" width="1" height="3" fill="#00e000"/><rect x="21" y="11" width="1" height="5" fill="#00e000"/><rect x="26" y="10" width="1" height="6" fill="#00e000"/><rect x="28" y="12" width="1" height="4" fill="#00e000"/><rect x="31" y="14" width="1" height="2" fill="#00e000"/><rect x="45" y="15" width="1" height="1" fill="#00e000"/><rect x="48" y="14" width="1" height="2" fill="#00e000"/><rect x="55" y="14" width="1" height="2" fill="#00e000"/><rect x="75" y="15" width="1" height="1" fill="#00e000"/><rect x="90" y="14" width="1" height="2" fill="#00e000"/><rect x="106" y="15" width="1" height="1" fill="#00e000"/><rect x="118" y="14" width="1" height="2" fill="#00e000"/><rect x="128" y="13" width="1" height="3" fill="#00e000"/><rect x="130" y="14" width="1" height="2" fill="#00e000"/><rect x="7" y="19" width="1" height="16" fill="#9e9468"/><rect x="22" y="19" width="1" height="16" fill="#9e9468"/><rect x="37" y="19" width="1" height="16" fill="#9e9468"/><rect x="52" y="19" width="1" height="16" fill="#9e9468"/><rect x="67" y="19" width="1" height="16" fill="#9e9468"/><rect x="82" y="19" width="1" height="16" fill="#9e9468"/><rect x="97" y="19" width="1" height="16" fill="#9e9468"/><rect x="112" y="19" width="1" height="16" fill="#9e9468"/><rect x="127" y="19" width="1" height="16" fill="#9e9468"/><rect x="2" y="34" width="1" height="1" fill="#6040e0"/><rect x="6" y="34" width="1" height="1" fill="#20c8f0"/><rect x="7" y="34" width="1" height="1" fill="#20c8f0"/><rect x="9" y="34" width="1" height="1" fill="#20c8f0"/><rect x="12" y="34" width="1" height="1" fill="#6040e0"/><rect x="15" y="34" width="1" height="1" fill="#6040e0"/><rect x="16" y="34" width="1" height="1" fill="#20c8f0"/><rect x="22" y="34" width="1" height="1" fill="#6040e0"/><rect x="33" y="34" width="1" height="1" fill="#6040e0"/><rect x="36" y="34" width="1" height="1" fill="#20c8f0"/><rect x="37" y="34" width="1" height="1" fill="#20c8f0"/><rect x="38" y="34" width="1" height="1" fill="#20c8f0"/><rect x="42" y="34" width="1" height="1" fill="#6040e0"/><rect x="44" y="34" width="1" height="1" fill="#6040e0"/><rect x="46" y="34" width="1" height="1" fill="#6040e0"/><rect x="47" y="34" width="1" height="1" fill="#20c8f0"/><rect x="50" y="34" width="1" height="1" fill="#20c8f0"/><rect x="52" y="34" width="1" height="1" fill="#20c8f0"/><rect x="53" y="34" width="1" height="1" fill="#6040e0"/><rect x="54" y="34" width="1" height="1" fill="#6040e0"/><rect x="55" y="34" width="1" height="1" fill="#20c8f0"/><rect x="56" y="34" width="1" height="1" fill="#6040e0"/><rect x="58" y="34" width="1" height="1" fill="#6040e0"/><rect x="61" y="34" width="1" height="1" fill="#20c8f0"/><rect x="62" y="34" width="1" height="1" fill="#6040e0"/><rect x="63" y="34" width="1" height="1" fill="#20c8f0"/><rect x="64" y="34" width="1" height="1" fill="#6040e0"/><rect x="66" y="34" width="1" height="1" fill="#20c8f0"/><rect x="70" y="34" width="1" height="1" fill="#20c8f0"/><rect x="72" y="34" width="1" height="1" fill="#20c8f0"/><rect x="76" y="34" width="1" height="1" fill="#6040e0"/><rect x="77" y="34" width="1" height="1" fill="#6040e0"/><rect x="79" y="34" width="1" height="1" fill="#6040e0"/><rect x="81" y="34" width="1" height="1" fill="#20c8f0"/><rect x="83" y="34" width="1" height="1" fill="#20c8f0"/><rect x="84" y="34" width="1" height="1" fill="#20c8f0"/><rect x="85" y="34" width="1" height="1" fill="#20c8f0"/><rect x="86" y="34" width="1" height="1" fill="#6040e0"/><rect x="87" y="34" width="1" height="1" fill="#6040e0"/><rect x="88" y="34" width="1" height="1" fill="#20c8f0"/><rect x="89" y="34" width="1" height="1" fill="#20c8f0"/><rect x="90" y="34" width="1" height="1" fill="#6040e0"/><rect x="92" y="34" width="1" height="1" fill="#20c8f0"/><rect x="94" y="34" width="1" height="1" fill="#6040e0"/><rect x="95" y="34" width="1" height="1" fill="#20c8f0"/><rect x="97" y="34" width="1" height="1" fill="#6040e0"/><rect x="100" y="34" width="1" height="1" fill="#6040e0"/><rect x="103" y="34" width="1" height="1" fill="#20c8f0"/><rect x="104" y="34" width="1" height="1" fill="#20c8f0"/><rect x="105" y="34" width="1" height="1" fill="#6040e0"/><rect x="106" y="34" width="1" height="1" fill="#20c8f0"/><rect x="107" y="34" width="1" height="1" fill="#6040e0"/><rect x="110" y="34" width="1" height="1" fill="#20c8f0"/><rect x="111" y="34" width="1" height="1" fill="#20c8f0"/><rect x="112" y="34" width="1" height="1" fill="#20c8f0"/><rect x="113" y="34" width="1" height="1" fill="#6040e0"/><rect x="116" y="34" width="1" height="1" fill="#6040e0"/><rect x="117" y="34" width="1" height="1" fill="#20c8f0"/><rect x="118" y="34" width="1" height="1" fill="#20c8f0"/><rect x="121" y="34" width="1" height="1" fill="#6040e0"/><rect x="122" y="34" width="1" height="1" fill="#20c8f0"/><rect x="123" y="34" width="1" height="1" fill="#20c8f0"/><rect x="124" y="34" width="1" height="1" fill="#20c8f0"/><rect x="125" y="34" width="1" height="1" fill="#20c8f0"/><rect x="132" y="34" width="1" height="1" fill="#20c8f0"/><rect x="134" y="34" width="1" height="1" fill="#6040e0"/><rect x="136" y="34" width="1" height="1" fill="#6040e0"/><rect x="7" y="36" width="1" height="16" fill="#9e9468"/><rect x="22" y="36" width="1" height="16" fill="#9e9468"/><rect x="37" y="36" width="1" height="16" fill="#9e9468"/><rect x="52" y="36" width="1" height="16" fill="#9e9468"/><rect x="67" y="36" width="1" height="16" fill="#9e9468"/><rect x="82" y="36" width="1" height="16" fill="#9e9468"/><rect x="97" y="36" width="1" height="16" fill="#9e9468"/><rect x="112" y="36" width="1" height="16" fill="#9e9468"/><rect x="127" y="36" width="1" height="16" fill="#9e9468"/><rect x="0" y="46" width="1" height="6" fill="#00e000"/><rect x="1" y="43" width="1" height="9" fill="#00e000"/><rect x="2" y="40" width="1" height="12" fill="#00e000"/><rect x="3" y="37" width="1" height="15" fill="#00e000"/><rect x="4" y="37" width="1" height="15" fill="#00e000"/><rect x="5" y="37" width="1" height="15" fill="#00e000"/><rect x="6" y="37" width="1" height="15" fill="#00e000"/><rect x="7" y="37" width="1" height="15" fill="#00e000"/><rect x="8" y="37" width="1" height="15" fill="#00e000"/><rect x="9" y="37" width="1" height="15" fill="#00e000"/><rect x="10" y="37" width="1" height="15" fill="#00e000"/><rect x="11" y="37" width="1" height="15" fill="#00e000"/><rect x="12" y="47" width="1" height="5" fill="#00e000"/><rect x="13" y="37" width="1" height="15" fill="#00e000"/><rect x="14" y="37" width="1" height="15" fill="#00e000"/><rect x="15" y="37" width="1" height="15" fill="#00e000"/><rect x="16" y="37" width="1" height="15" fill="#00e000"/><rect x="17" y="49" width="1" height="3" fill="#00e000"/><rect x="18" y="37" width="1" height="15" fill="#00e000"/><rect x="19" y="37" width="1" height="15" fill="#00e000"/><rect x="20" y="37" width="1" height="15" fill="#00e000"/><rect x="21" y="48" width="1" height="4" fill="#00e000"/><rect x="22" y="37" width="1" height="15" fill="#00e000"/><rect x="23" y="37" width="1" height="15" fill="#00e000"/><rect x="24" y="37" width="1" height="15" fill="#00e000"/><rect x="25" y="37" width="1" height="15" fill="#00e000"/><rect x="26" y="42" width="1" height="10" fill="#00e000"/><rect x="27" y="37" width="1" height="15" fill="#00e000"/><rect x="28" y="45" width="1" height="7" fill="#00e000"/><rect x="29" y="37" width="1" height="15" fill="#00e000"/><rect x="30" y="37" width="1" height="15" fill="#00e000"/><rect x="31" y="37" width="1" height="15" fill="#00e000"/><rect x="32" y="37" width="1" height="15" fill="#00e000"/><rect x="33" y="37" width="1" height="15" fill="#00e000"/><rect x="34" y="37" width="1" height="15" fill="#00e000"/><rect x="35" y="45" width="1" height="7" fill="#00e000"/><rect x="36" y="37" width="1" height="15" fill="#00e000"/><rect x="37" y="37" width="1" height="15" fill="#00e000"/><rect x="38" y="37" width="1" height="15" fill="#00e000"/><rect x="39" y="47" width="1" height="5" fill="#00e000"/><rect x="40" y="37" width="1" height="15" fill="#00e000"/><rect x="41" y="37" width="1" height="15" fill="#00e000"/><rect x="42" y="37" width="1" height="15" fill="#00e000"/><rect x="43" y="37" width="1" height="15" fill="#00e000"/><rect x="44" y="38" width="1" height="14" fill="#00e000"/><rect x="45" y="37" width="1" height="15" fill="#00e000"/><rect x="46" y="37" width="1" height="15" fill="#00e000"/><rect x="47" y="37" width="1" height="15" fill="#00e000"/><rect x="48" y="38" width="1" height="14" fill="#00e000"/><rect x="49" y="37" width="1" height="15" fill="#00e000"/><rect x="50" y="37" width="1" height="15" fill="#00e000"/><rect x="51" y="37" width="1" height="15" fill="#00e000"/><rect x="52" y="37" width="1" height="15" fill="#00e000"/><rect x="53" y="37" width="1" height="15" fill="#00e000"/><rect x="54" y="37" width="1" height="15" fill="#00e000"/><rect x="55" y="37" width="1" height="15" fill="#00e000"/><rect x="56" y="37" width="1" height="15" fill="#00e000"/><rect x="57" y="37" width="1" height="15" fill="#00e000"/><rect x="58" y="38" width="1" height="14" fill="#00e000"/><rect x="59" y="37" width="1" height="15" fill="#00e000"/><rect x="60" y="37" width="1" height="15" fill="#00e000"/><rect x="61" y="42" width="1" height="10" fill="#00e000"/><rect x="62" y="37" width="1" height="15" fill="#00e000"/><rect x="63" y="37" width="1" height="15" fill="#00e000"/><rect x="64" y="37" width="1" height="15" fill="#00e000"/><rect x="65" y="37" width="1" height="15" fill="#00e000"/><rect x="66" y="48" width="1" height="4" fill="#00e000"/><rect x="67" y="38" width="1" height="14" fill="#00e000"/><rect x="68" y="37" width="1" height="15" fill="#00e000"/><rect x="69" y="37" width="1" height="15" fill="#00e000"/><rect x="70" y="38" width="1" height="14" fill="#00e000"/><rect x="71" y="37" width="1" height="15" fill="#00e000"/><rect x="72" y="37" width="1" height="15" fill="#00e000"/><rect x="73" y="37" width="1" height="15" fill="#00e000"/><rect x="74" y="37" width="1" height="15" fill="#00e000"/><rect x="75" y="37" width="1" height="15" fill="#00e000"/><rect x="76" y="37" width="1" height="15" fill="#00e000"/><rect x="77" y="37" width="1" height="15" fill="#00e000"/><rect x="78" y="49" width="1" height="3" fill="#00e000"/><rect x="79" y="37" width="1" height="15" fill="#00e000"/><rect x="80" y="37" width="1" height="15" fill="#00e000"/><rect x="81" y="37" width="1" height="15" fill="#00e000"/><rect x="82" y="37" width="1" height="15" fill="#00e000"/><rect x="83" y="37" width="1" height="15" fill="#00e000"/><rect x="84" y="37" width="1" height="15" fill="#00e000"/><rect x="85" y="38" width="1" height="14" fill="#00e000"/><rect x="86" y="37" width="1" height="15" fill="#00e000"/><rect x="87" y="37" width="1" height="15" fill="#00e000"/><rect x="88" y="37" width="1" height="15" fill="#00e000"/><rect x="89" y="37" width="1" height="15" fill="#00e000"/><rect x="90" y="37" width="1" height="15" fill="#00e000"/><rect x="91" y="37" width="1" height="15" fill="#00e000"/><rect x="92" y="45" width="1" height="7" fill="#00e000"/><rect x="93" y="37" width="1" height="15" fill="#00e000"/><rect x="94" y="43" width="1" height="9" fill="#00e000"/><rect x="95" y="37" width="1" height="15" fill="#00e000"/><rect x="96" y="37" width="1" height="15" fill="#00e000"/><rect x="97" y="37" width="1" height="15" fill="#00e000"/><rect x="98" y="37" width="1" height="15" fill="#00e000"/><rect x="99" y="37" width="1" height="15" fill="#00e000"/><rect x="100" y="48" width="1" height="4" fill="#00e000"/><rect x="101" y="45" width="1" height="7" fill="#00e000"/><rect x="102" y="37" width="1" height="15" fill="#00e000"/><rect x="103" y="38" width="1" height="14" fill="#00e000"/><rect x="104" y="37" width="1" height="15" fill="#00e000"/><rect x="105" y="37" width="1" height="15" fill="#00e000"/><rect x="106" y="37" width="1" height="15" fill="#00e000"/><rect x="107" y="37" width="1" height="15" fill="#00e000"/><rect x="108" y="37" width="1" height="15" fill="#00e000"/><rect x="109" y="37" width="1" height="15" fill="#00e000"/><rect x="110" y="43" width="1" height="9" fill="#00e000"/><rect x="111" y="37" width="1" height="15" fill="#00e000"/><rect x="112" y="37" width="1" height="15" fill="#00e000"/><rect x="113" y="37" width="1" height="15" fill="#00e000"/><rect x="114" y="37" width="1" height="15" fill="#00e000"/><rect x="115" y="43" width="1" height="9" fill="#00e000"/><rect x="116" y="37" width="1" height="15" fill="#00e000"/><rect x="117" y="37" width="1" height="15" fill="#00e000"/><rect x="118" y="37" width="1" height="15" fill="#00e000"/><rect x="119" y="37" width="1" height="15" fill="#00e000"/><rect x="120" y="47" width="1" height="5" fill="#00e000"/><rect x="121" y="37" width="1" height="15" fill="#00e000"/><rect x="122" y="37" width="1" height="15" fill="#00e000"/><rect x="123" y="37" width="1" height="15" fill="#00e000"/><rect x="124" y="37" width="1" height="15" fill="#00e000"/><rect x="125" y="37" width="1" height="15" fill="#00e000"/><rect x="126" y="37" width="1" height="15" fill="#00e000"/><rect x="127" y="37" width="1" height="15" fill="#00e000"/><rect x="128" y="37" width="1" height="15" fill="#00e000"/><rect x="129" y="37" width="1" height="15" fill="#00e000"/><rect x="130" y="37" width="1" height="15" fill="#00e000"/><rect x="131" y="38" width="1" height="14" fill="#00e000"/><rect x="132" y="51" width="1" height="1" fill="#f04020"/><rect x="134" y="51" width="1" height="1" fill="#f04020"/><rect x="136" y="51" width="1" height="1" fill="#f04020"/><rect x="138" y="51" width="1" height="1" fill="#f04020"/><rect x="8" y="51" width="6" height="1" fill="#f04020"/><rect x="18" y="51" width="7" height="1" fill="#f04020"/><rect x="7" y="54" width="1" height="16" fill="#9e9468"/><rect x="22" y="54" width="1" height="16" fill="#9e9468"/><rect x="37" y="54" width="1" height="16" fill="#9e9468"/><rect x="52" y="54" width="1" height="16" fill="#9e9468"/><rect x="67" y="54" width="1" height="16" fill="#9e9468"/><rect x="82" y="54" width="1" height="16" fill="#9e9468"/><rect x="97" y="54" width="1" height="16" fill="#9e9468"/><rect x="112" y="54" width="1" height="16" fill="#9e9468"/><rect x="127" y="54" width="1" height="16" fill="#9e9468"/><rect x="7" y="71" width="1" height="16" fill="#9e9468"/><rect x="22" y="71" width="1" height="16" fill="#9e9468"/><rect x="37" y="71" width="1" height="16" fill="#9e9468"/><rect x="52" y="71" width="1" height="16" fill="#9e9468"/><rect x="67" y="71" width="1" height="16" fill="#9e9468"/><rect x="82" y="71" width="1" height="16" fill="#9e9468"/><rect x="97" y="71" width="1" height="16" fill="#9e9468"/><rect x="112" y="71" width="1" height="16" fill="#9e9468"/><rect x="127" y="71" width="1" height="16" fill="#9e9468"/><rect x="0" y="86" width="140" height="1" fill="#f04020"/><rect x="0" y="83" width="1" height="3" fill="#00e000"/><rect x="10" y="85" width="1" height="1" fill="#00e000"/><rect x="12" y="82" width="1" height="4" fill="#00e000"/><rect x="13" y="82" width="1" height="4" fill="#00e000"/><rect x="16" y="76" width="1" height="10" fill="#00e000"/><rect x="26" y="84" width="1" height="2" fill="#00e000"/><rect x="31" y="79" width="1" height="7" fill="#00e000"/><rect x="41" y="85" width="1" height="1" fill="#00e000"/><rect x="47" y="85" width="1" height="1" fill="#00e000"/><rect x="55" y="85" width="1" height="1" fill="#00e000"/><rect x="72" y="85" width="1" height="1" fill="#00e000"/><rect x="83" y="85" width="1" height="1" fill="#00e000"/><rect x="93" y="85" width="1" height="1" fill="#00e000"/><rect x="104" y="77" width="1" height="9" fill="#00e000"/><rect x="112" y="78" width="1" height="8" fill="#00e000"/><rect x="130" y="83" width="1" height="3" fill="#00e000"/><rect x="15" y="85" width="1" height="1" fill="#00e000"/><rect x="64" y="85" width="1" height="1" fill="#00e000"/><rect x="7" y="89" width="1" height="16" fill="#9e9468"/><rect x="22" y="89" width="1" height="16" fill="#9e9468"/><rect x="37" y="89" width="1" height="16" fill="#9e9468"/><rect x="52" y="89" width="1" height="16" fill="#9e9468"/><rect x="67" y="89" width="1" height="16" fill="#9e9468"/><rect x="82" y="89" width="1" height="16" fill="#9e9468"/><rect x="97" y="89" width="1" height="16" fill="#9e9468"/><rect x="112" y="89" width="1" height="16" fill="#9e9468"/><rect x="127" y="89" width="1" height="16" fill="#9e9468"/><rect x="7" y="106" width="1" height="16" fill="#9e9468"/><rect x="22" y="106" width="1" height="16" fill="#9e9468"/><rect x="37" y="106" width="1" height="16" fill="#9e9468"/><rect x="52" y="106" width="1" height="16" fill="#9e9468"/><rect x="67" y="106" width="1" height="16" fill="#9e9468"/><rect x="82" y="106" width="1" height="16" fill="#9e9468"/><rect x="97" y="106" width="1" height="16" fill="#9e9468"/><rect x="112" y="106" width="1" height="16" fill="#9e9468"/><rect x="127" y="106" width="1" height="16" fill="#9e9468"/><rect x="1" y="121" width="1" height="1" fill="#f04020"/><rect x="16" y="121" width="1" height="1" fill="#f04020"/><rect x="29" y="121" width="1" height="1" fill="#f04020"/><rect x="36" y="121" width="1" height="1" fill="#00e000"/><rect x="41" y="121" width="1" height="1" fill="#f04020"/><rect x="50" y="121" width="1" height="1" fill="#f04020"/><rect x="54" y="121" width="1" height="1" fill="#f04020"/><rect x="55" y="121" width="1" height="1" fill="#00e000"/><rect x="57" y="121" width="1" height="1" fill="#f04020"/><rect x="63" y="121" width="1" height="1" fill="#00e000"/><rect x="68" y="121" width="1" height="1" fill="#f04020"/><rect x="76" y="121" width="1" height="1" fill="#00e000"/><rect x="78" y="121" width="1" height="1" fill="#00e000"/><rect x="81" y="121" width="1" height="1" fill="#00e000"/><rect x="89" y="121" width="1" height="1" fill="#00e000"/><rect x="91" y="121" width="1" height="1" fill="#00e000"/><rect x="98" y="121" width="1" height="1" fill="#f04020"/><rect x="103" y="121" width="1" height="1" fill="#f04020"/><rect x="105" y="121" width="1" height="1" fill="#00e000"/><rect x="113" y="121" width="1" height="1" fill="#00e000"/><rect x="124" y="121" width="1" height="1" fill="#00e000"/><rect x="125" y="121" width="1" height="1" fill="#00e000"/><rect x="133" y="121" width="1" height="1" fill="#f04020"/><rect x="0" y="116" width="1" height="5" fill="#00e000"/><rect x="1" y="118" width="1" height="3" fill="#00e000"/><rect x="2" y="119" width="1" height="2" fill="#00e000"/><rect x="3" y="120" width="1" height="1" fill="#00e000"/><rect x="82" y="120" width="1" height="1" fill="#00e000"/><rect x="84" y="118" width="1" height="3" fill="#00e000"/><rect x="86" y="120" width="1" height="1" fill="#00e000"/><rect x="90" y="119" width="1" height="2" fill="#00e000"/><rect x="106" y="120" width="1" height="1" fill="#00e000"/><rect x="118" y="119" width="1" height="2" fill="#00e000"/><rect x="80" y="121" width="1" height="1" fill="#00e000"/><rect x="81" y="121" width="1" height="1" fill="#00e000"/><rect x="82" y="121" width="1" height="1" fill="#00e000"/><rect x="84" y="121" width="1" height="1" fill="#00e000"/><rect x="85" y="121" width="1" height="1" fill="#f04020"/><rect x="86" y="121" width="1" height="1" fill="#00e000"/><rect x="88" y="121" width="1" height="1" fill="#f04020"/><rect x="89" y="121" width="1" height="1" fill="#f04020"/><rect x="90" y="121" width="1" height="1" fill="#f04020"/><rect x="91" y="121" width="1" height="1" fill="#f04020"/><rect x="93" y="121" width="1" height="1" fill="#f04020"/><rect x="94" y="121" width="1" height="1" fill="#f04020"/><rect x="95" y="121" width="1" height="1" fill="#f04020"/><rect x="99" y="121" width="1" height="1" fill="#00e000"/><rect x="100" y="121" width="1" height="1" fill="#f04020"/><rect x="101" y="121" width="1" height="1" fill="#f04020"/><rect x="102" y="121" width="1" height="1" fill="#00e000"/><rect x="104" y="121" width="1" height="1" fill="#f04020"/><rect x="105" y="121" width="1" height="1" fill="#f04020"/><rect x="106" y="121" width="1" height="1" fill="#00e000"/><rect x="107" y="121" width="1" height="1" fill="#f04020"/><rect x="108" y="121" width="1" height="1" fill="#f04020"/><rect x="109" y="121" width="1" height="1" fill="#00e000"/><rect x="110" y="121" width="1" height="1" fill="#00e000"/><rect x="111" y="121" width="1" height="1" fill="#00e000"/><rect x="112" y="121" width="1" height="1" fill="#f04020"/><rect x="114" y="121" width="1" height="1" fill="#00e000"/><rect x="115" y="121" width="1" height="1" fill="#f04020"/><rect x="116" y="121" width="1" height="1" fill="#f04020"/><rect x="120" y="121" width="1" height="1" fill="#00e000"/><rect x="121" y="121" width="1" height="1" fill="#00e000"/><rect x="122" y="121" width="1" height="1" fill="#00e000"/><rect x="123" y="121" width="1" height="1" fill="#00e000"/><rect x="124" y="121" width="1" height="1" fill="#f04020"/><rect x="125" y="121" width="1" height="1" fill="#00e000"/><rect x="126" y="121" width="1" height="1" fill="#00e000"/><rect x="127" y="121" width="1" height="1" fill="#f04020"/><rect x="128" y="121" width="1" height="1" fill="#00e000"/><rect x="129" y="121" width="1" height="1" fill="#00e000"/><rect x="7" y="124" width="1" height="16" fill="#9e9468"/><rect x="22" y="124" width="1" height="16" fill="#9e9468"/><rect x="37" y="124" width="1" height="16" fill="#9e9468"/><rect x="52" y="124" width="1" height="16" fill="#9e9468"/><rect x="67" y="124" width="1" height="16" fill="#9e9468"/><rect x="82" y="124" width="1" height="16" fill="#9e9468"/><rect x="97" y="124" width="1" height="16" fill="#9e9468"/><rect x="112" y="124" width="1" height="16" fill="#9e9468"/><rect x="127" y="124" width="1" height="16" fill="#9e9468"/><rect x="54" y="138" width="1" height="1" fill="#f04020"/><rect x="7" y="141" width="1" height="16" fill="#9e9468"/><rect x="22" y="141" width="1" height="16" fill="#9e9468"/><rect x="37" y="141" width="1" height="16" fill="#9e9468"/><rect x="52" y="141" width="1" height="16" fill="#9e9468"/><rect x="67" y="141" width="1" height="16" fill="#9e9468"/><rect x="82" y="141" width="1" height="16" fill="#9e9468"/><rect x="97" y="141" width="1" height="16" fill="#9e9468"/><rect x="112" y="141" width="1" height="16" fill="#9e9468"/><rect x="127" y="141" width="1" height="16" fill="#9e9468"/><rect x="1" y="156" width="1" height="1" fill="#8040c0"/><rect x="2" y="156" width="1" height="1" fill="#f04020"/><rect x="3" y="156" width="1" height="1" fill="#8040c0"/><rect x="6" y="156" width="1" height="1" fill="#8040c0"/><rect x="8" y="156" width="1" height="1" fill="#f04020"/><rect x="11" y="156" width="1" height="1" fill="#f04020"/><rect x="13" y="156" width="1" height="1" fill="#8040c0"/><rect x="14" y="156" width="1" height="1" fill="#8040c0"/><rect x="16" y="156" width="1" height="1" fill="#f04020"/><rect x="20" y="156" width="1" height="1" fill="#8040c0"/><rect x="22" y="156" width="1" height="1" fill="#8040c0"/><rect x="23" y="156" width="1" height="1" fill="#8040c0"/><rect x="24" y="156" width="1" height="1" fill="#f04020"/><rect x="26" y="156" width="1" height="1" fill="#f04020"/><rect x="28" y="156" width="1" height="1" fill="#8040c0"/><rect x="32" y="156" width="1" height="1" fill="#f04020"/><rect x="35" y="156" width="1" height="1" fill="#f04020"/><rect x="43" y="156" width="1" height="1" fill="#00e000"/><rect x="48" y="156" width="1" height="1" fill="#00e000"/><rect x="58" y="156" width="1" height="1" fill="#00e000"/><rect x="64" y="156" width="1" height="1" fill="#f04020"/><rect x="68" y="156" width="1" height="1" fill="#f04020"/><rect x="78" y="156" width="1" height="1" fill="#f04020"/><rect x="101" y="156" width="1" height="1" fill="#f04020"/><rect x="109" y="156" width="1" height="1" fill="#00e000"/><rect x="114" y="156" width="1" height="1" fill="#00e000"/><rect x="118" y="156" width="1" height="1" fill="#f04020"/><rect x="122" y="156" width="1" height="1" fill="#00e000"/><rect x="125" y="156" width="1" height="1" fill="#00e000"/><rect x="63" y="144" width="1" height="12" fill="#00e000"/><rect x="127" y="144" width="1" height="12" fill="#00e000"/><rect x="7" y="159" width="1" height="16" fill="#9e9468"/><rect x="22" y="159" width="1" height="16" fill="#9e9468"/><rect x="37" y="159" width="1" height="16" fill="#9e9468"/><rect x="52" y="159" width="1" height="16" fill="#9e9468"/><rect x="67" y="159" width="1" height="16" fill="#9e9468"/><rect x="82" y="159" width="1" height="16" fill="#9e9468"/><rect x="97" y="159" width="1" height="16" fill="#9e9468"/><rect x="112" y="159" width="1" height="16" fill="#9e9468"/><rect x="127" y="159" width="1" height="16" fill="#9e9468"/><rect x="46" y="173" width="1" height="1" fill="#00e000"/><rect x="7" y="176" width="1" height="16" fill="#9e9468"/><rect x="22" y="176" width="1" height="16" fill="#9e9468"/><rect x="37" y="176" width="1" height="16" fill="#9e9468"/><rect x="52" y="176" width="1" height="16" fill="#9e9468"/><rect x="67" y="176" width="1" height="16" fill="#9e9468"/><rect x="82" y="176" width="1" height="16" fill="#9e9468"/><rect x="97" y="176" width="1" height="16" fill="#9e9468"/><rect x="112" y="176" width="1" height="16" fill="#9e9468"/><rect x="127" y="176" width="1" height="16" fill="#9e9468"/><rect x="16" y="191" width="1" height="1" fill="#f04020"/><rect x="29" y="191" width="1" height="1" fill="#00e000"/><rect x="30" y="191" width="1" height="1" fill="#00e000"/><rect x="47" y="191" width="1" height="1" fill="#00e000"/><rect x="49" y="191" width="1" height="1" fill="#00e000"/><rect x="56" y="191" width="1" height="1" fill="#00e000"/><rect x="59" y="191" width="1" height="1" fill="#f04020"/><rect x="62" y="191" width="1" height="1" fill="#00e000"/><rect x="67" y="191" width="1" height="1" fill="#f04020"/><rect x="75" y="191" width="1" height="1" fill="#00e000"/><rect x="76" y="191" width="1" height="1" fill="#00e000"/><rect x="79" y="191" width="1" height="1" fill="#f04020"/><rect x="89" y="191" width="1" height="1" fill="#f04020"/><rect x="97" y="191" width="1" height="1" fill="#f04020"/><rect x="102" y="191" width="1" height="1" fill="#f04020"/><rect x="106" y="191" width="1" height="1" fill="#f04020"/><rect x="114" y="191" width="1" height="1" fill="#f04020"/><rect x="132" y="191" width="1" height="1" fill="#00e000"/><rect x="2" y="190" width="1" height="1" fill="#00e000"/><rect x="7" y="190" width="1" height="1" fill="#00e000"/><rect x="10" y="190" width="1" height="1" fill="#00e000"/><rect x="22" y="180" width="1" height="11" fill="#00e000"/><rect x="25" y="190" width="1" height="1" fill="#00e000"/><rect x="43" y="190" width="1" height="1" fill="#00e000"/><rect x="56" y="190" width="1" height="1" fill="#00e000"/><rect x="72" y="190" width="1" height="1" fill="#00e000"/><rect x="87" y="189" width="1" height="2" fill="#00e000"/><rect x="100" y="189" width="1" height="2" fill="#00e000"/><rect x="105" y="188" width="1" height="3" fill="#00e000"/><rect x="118" y="187" width="1" height="4" fill="#00e000"/><rect x="125" y="189" width="1" height="2" fill="#00e000"/><rect x="7" y="194" width="1" height="16" fill="#9e9468"/><rect x="22" y="194" width="1" height="16" fill="#9e9468"/><rect x="37" y="194" width="1" height="16" fill="#9e9468"/><rect x="52" y="194" width="1" height="16" fill="#9e9468"/><rect x="67" y="194" width="1" height="16" fill="#9e9468"/><rect x="82" y="194" width="1" height="16" fill="#9e9468"/><rect x="97" y="194" width="1" height="16" fill="#9e9468"/><rect x="112" y="194" width="1" height="16" fill="#9e9468"/><rect x="127" y="194" width="1" height="16" fill="#9e9468"/><rect x="7" y="211" width="1" height="16" fill="#9e9468"/><rect x="22" y="211" width="1" height="16" fill="#9e9468"/><rect x="37" y="211" width="1" height="16" fill="#9e9468"/><rect x="52" y="211" width="1" height="16" fill="#9e9468"/><rect x="67" y="211" width="1" height="16" fill="#9e9468"/><rect x="82" y="211" width="1" height="16" fill="#9e9468"/><rect x="97" y="211" width="1" height="16" fill="#9e9468"/><rect x="112" y="211" width="1" height="16" fill="#9e9468"/><rect x="127" y="211" width="1" height="16" fill="#9e9468"/><rect x="7" y="229" width="1" height="16" fill="#9e9468"/><rect x="22" y="229" width="1" height="16" fill="#9e9468"/><rect x="37" y="229" width="1" height="16" fill="#9e9468"/><rect x="52" y="229" width="1" height="16" fill="#9e9468"/><rect x="67" y="229" width="1" height="16" fill="#9e9468"/><rect x="82" y="229" width="1" height="16" fill="#9e9468"/><rect x="97" y="229" width="1" height="16" fill="#9e9468"/><rect x="112" y="229" width="1" height="16" fill="#9e9468"/><rect x="127" y="229" width="1" height="16" fill="#9e9468"/><rect x="0" y="244" width="140" height="1" fill="#8000e0"/><rect x="0" y="243" width="1" height="1" fill="#00e000"/><rect x="1" y="244" width="1" height="1" fill="#20d8e8"/><rect x="3" y="243" width="1" height="1" fill="#00e000"/><rect x="6" y="242" width="1" height="3" fill="#20d8e8"/><rect x="8" y="242" width="1" height="2" fill="#f04020"/><rect x="9" y="243" width="1" height="1" fill="#00e000"/><rect x="10" y="243" width="1" height="1" fill="#f04020"/><rect x="13" y="243" width="1" height="1" fill="#00e000"/><rect x="16" y="243" width="1" height="1" fill="#00e000"/><rect x="17" y="243" width="1" height="1" fill="#00e000"/><rect x="18" y="241" width="1" height="3" fill="#f04020"/><rect x="22" y="244" width="1" height="1" fill="#20d8e8"/><rect x="23" y="244" width="1" height="1" fill="#20d8e8"/><rect x="27" y="244" width="1" height="1" fill="#20d8e8"/><rect x="30" y="244" width="1" height="1" fill="#20d8e8"/><rect x="36" y="243" width="1" height="1" fill="#f04020"/><rect x="38" y="242" width="1" height="3" fill="#20d8e8"/><rect x="45" y="244" width="1" height="1" fill="#20d8e8"/><rect x="46" y="244" width="1" height="1" fill="#20d8e8"/><rect x="49" y="242" width="1" height="3" fill="#20d8e8"/><rect x="51" y="243" width="1" height="1" fill="#00e000"/><rect x="55" y="243" width="1" height="1" fill="#f04020"/><rect x="57" y="243" width="1" height="1" fill="#f04020"/><rect x="59" y="241" width="1" height="3" fill="#f04020"/><rect x="60" y="243" width="1" height="1" fill="#00e000"/><rect x="63" y="243" width="1" height="1" fill="#00e000"/><rect x="64" y="243" width="1" height="1" fill="#f04020"/><rect x="66" y="243" width="1" height="1" fill="#00e000"/><rect x="70" y="244" width="1" height="1" fill="#20d8e8"/><rect x="73" y="244" width="1" height="1" fill="#20d8e8"/><rect x="77" y="244" width="1" height="1" fill="#20d8e8"/><rect x="83" y="241" width="1" height="3" fill="#f04020"/><rect x="88" y="243" width="1" height="2" fill="#20d8e8"/><rect x="89" y="243" width="1" height="1" fill="#f04020"/><rect x="90" y="242" width="1" height="3" fill="#20d8e8"/><rect x="96" y="242" width="1" height="2" fill="#00e000"/><rect x="98" y="243" width="1" height="1" fill="#00e000"/><rect x="99" y="241" width="1" height="3" fill="#f04020"/><rect x="100" y="244" width="1" height="1" fill="#20d8e8"/><rect x="108" y="244" width="1" height="1" fill="#20d8e8"/><rect x="112" y="243" width="1" height="1" fill="#00e000"/><rect x="113" y="244" width="1" height="1" fill="#20d8e8"/><rect x="115" y="242" width="1" height="2" fill="#00e000"/><rect x="118" y="244" width="1" height="1" fill="#20d8e8"/><rect x="119" y="244" width="1" height="1" fill="#20d8e8"/><rect x="122" y="243" width="1" height="2" fill="#20d8e8"/><rect x="124" y="243" width="1" height="2" fill="#20d8e8"/><rect x="127" y="243" width="1" height="1" fill="#00e000"/><rect x="135" y="243" width="1" height="1" fill="#f04020"/><rect x="55" y="244" width="15" height="1" fill="#20d8e8"/><rect x="95" y="244" width="20" height="1" fill="#20d8e8"/><rect x="7" y="246" width="1" height="16" fill="#9e9468"/><rect x="22" y="246" width="1" height="16" fill="#9e9468"/><rect x="37" y="246" width="1" height="16" fill="#9e9468"/><rect x="52" y="246" width="1" height="16" fill="#9e9468"/><rect x="67" y="246" width="1" height="16" fill="#9e9468"/><rect x="82" y="246" width="1" height="16" fill="#9e9468"/><rect x="97" y="246" width="1" height="16" fill="#9e9468"/><rect x="112" y="246" width="1" height="16" fill="#9e9468"/><rect x="127" y="246" width="1" height="16" fill="#9e9468"/><rect x="0" y="260" width="1" height="1" fill="#00e000"/><rect x="102" y="260" width="1" height="1" fill="#00e000"/><rect x="132" y="260" width="1" height="1" fill="#00e000"/><rect x="10" y="260" width="1" height="1" fill="#f04020"/><rect x="15" y="260" width="1" height="1" fill="#f04020"/><rect x="23" y="259" width="1" height="2" fill="#f04020"/><rect x="31" y="260" width="1" height="1" fill="#f04020"/><rect x="7" y="264" width="1" height="16" fill="#9e9468"/><rect x="22" y="264" width="1" height="16" fill="#9e9468"/><rect x="37" y="264" width="1" height="16" fill="#9e9468"/><rect x="52" y="264" width="1" height="16" fill="#9e9468"/><rect x="67" y="264" width="1" height="16" fill="#9e9468"/><rect x="82" y="264" width="1" height="16" fill="#9e9468"/><rect x="97" y="264" width="1" height="16" fill="#9e9468"/><rect x="112" y="264" width="1" height="16" fill="#9e9468"/><rect x="127" y="264" width="1" height="16" fill="#9e9468"/><rect x="7" y="281" width="1" height="16" fill="#9e9468"/><rect x="22" y="281" width="1" height="16" fill="#9e9468"/><rect x="37" y="281" width="1" height="16" fill="#9e9468"/><rect x="52" y="281" width="1" height="16" fill="#9e9468"/><rect x="67" y="281" width="1" height="16" fill="#9e9468"/><rect x="82" y="281" width="1" height="16" fill="#9e9468"/><rect x="97" y="281" width="1" height="16" fill="#9e9468"/><rect x="112" y="281" width="1" height="16" fill="#9e9468"/><rect x="127" y="281" width="1" height="16" fill="#9e9468"/><rect x="0" y="295" width="1" height="1" fill="#00e000"/><rect x="10" y="295" width="1" height="1" fill="#00e000"/><rect x="24" y="294" width="1" height="2" fill="#00e000"/><rect x="45" y="284" width="1" height="12" fill="#00e000"/><rect x="45" y="295" width="1" height="1" fill="#00e000"/><rect x="46" y="295" width="1" height="1" fill="#00e000"/><rect x="55" y="295" width="1" height="1" fill="#00e000"/><rect x="60" y="295" width="1" height="1" fill="#00e000"/><rect x="74" y="295" width="1" height="1" fill="#00e000"/><rect x="76" y="295" width="1" height="1" fill="#00e000"/><rect x="77" y="295" width="1" height="1" fill="#00e000"/><rect x="133" y="294" width="1" height="2" fill="#00e000"/><rect x="134" y="295" width="1" height="1" fill="#00e000"/><rect x="15" y="295" width="1" height="1" fill="#f04020"/><rect x="20" y="295" width="1" height="1" fill="#f04020"/><rect x="28" y="295" width="1" height="1" fill="#f04020"/><rect x="29" y="295" width="1" height="1" fill="#f04020"/><rect x="69" y="295" width="1" height="1" fill="#f04020"/><rect x="93" y="295" width="1" height="1" fill="#f04020"/><rect x="98" y="295" width="1" height="1" fill="#f04020"/><rect x="108" y="295" width="1" height="1" fill="#f04020"/><rect x="123" y="295" width="1" height="1" fill="#f04020"/><rect x="128" y="295" width="1" height="1" fill="#f04020"/><rect x="7" y="299" width="1" height="16" fill="#9e9468"/><rect x="22" y="299" width="1" height="16" fill="#9e9468"/><rect x="37" y="299" width="1" height="16" fill="#9e9468"/><rect x="52" y="299" width="1" height="16" fill="#9e9468"/><rect x="67" y="299" width="1" height="16" fill="#9e9468"/><rect x="82" y="299" width="1" height="16" fill="#9e9468"/><rect x="97" y="299" width="1" height="16" fill="#9e9468"/><rect x="112" y="299" width="1" height="16" fill="#9e9468"/><rect x="127" y="299" width="1" height="16" fill="#9e9468"/><rect x="7" y="316" width="1" height="16" fill="#9e9468"/><rect x="22" y="316" width="1" height="16" fill="#9e9468"/><rect x="37" y="316" width="1" height="16" fill="#9e9468"/><rect x="52" y="316" width="1" height="16" fill="#9e9468"/><rect x="67" y="316" width="1" height="16" fill="#9e9468"/><rect x="82" y="316" width="1" height="16" fill="#9e9468"/><rect x="97" y="316" width="1" height="16" fill="#9e9468"/><rect x="112" y="316" width="1" height="16" fill="#9e9468"/><rect x="127" y="316" width="1" height="16" fill="#9e9468"/><rect x="7" y="334" width="1" height="16" fill="#9e9468"/><rect x="22" y="334" width="1" height="16" fill="#9e9468"/><rect x="37" y="334" width="1" height="16" fill="#9e9468"/><rect x="52" y="334" width="1" height="16" fill="#9e9468"/><rect x="67" y="334" width="1" height="16" fill="#9e9468"/><rect x="82" y="334" width="1" height="16" fill="#9e9468"/><rect x="97" y="334" width="1" height="16" fill="#9e9468"/><rect x="112" y="334" width="1" height="16" fill="#9e9468"/><rect x="127" y="334" width="1" height="16" fill="#9e9468"/><rect x="0" y="349" width="1" height="1" fill="#f04020"/><rect x="3" y="349" width="1" height="1" fill="#f04020"/><rect x="5" y="349" width="1" height="1" fill="#00e000"/><rect x="8" y="349" width="1" height="1" fill="#00e000"/><rect x="9" y="349" width="1" height="1" fill="#00e000"/><rect x="11" y="349" width="1" height="1" fill="#00e000"/><rect x="14" y="349" width="1" height="1" fill="#f04020"/><rect x="21" y="349" width="1" height="1" fill="#f04020"/><rect x="27" y="349" width="1" height="1" fill="#00e000"/><rect x="28" y="349" width="1" height="1" fill="#00e000"/><rect x="29" y="349" width="1" height="1" fill="#00e000"/><rect x="35" y="349" width="1" height="1" fill="#f04020"/><rect x="43" y="349" width="1" height="1" fill="#f04020"/><rect x="45" y="349" width="1" height="1" fill="#f04020"/><rect x="53" y="349" width="1" height="1" fill="#f04020"/><rect x="81" y="349" width="1" height="1" fill="#f04020"/><rect x="84" y="349" width="1" height="1" fill="#00e000"/><rect x="85" y="349" width="1" height="1" fill="#00e000"/><rect x="101" y="349" width="1" height="1" fill="#00e000"/><rect x="102" y="349" width="1" height="1" fill="#f04020"/><rect x="116" y="349" width="1" height="1" fill="#f04020"/><rect x="117" y="349" width="1" height="1" fill="#00e000"/><rect x="122" y="349" width="1" height="1" fill="#00e000"/><rect x="128" y="349" width="1" height="1" fill="#f04020"/><rect x="131" y="349" width="1" height="1" fill="#00e000"/><rect x="135" y="349" width="1" height="1" fill="#f04020"/><rect x="137" y="349" width="1" height="1" fill="#f04020"/><rect x="18" y="339" width="1" height="10" fill="#00e000"/><rect x="23" y="346" width="1" height="3" fill="#00e000"/><rect x="38" y="347" width="1" height="2" fill="#00e000"/><rect x="54" y="347" width="1" height="2" fill="#00e000"/><rect x="57" y="337" width="1" height="12" fill="#00e000"/><rect x="76" y="337" width="1" height="12" fill="#00e000"/><rect x="91" y="348" width="1" height="1" fill="#00e000"/></svg><svg style="position:absolute;left:734px;top:430px" width="141" height="70" shape-rendering="crispEdges"><rect x="7" y="1" width="1" height="16" fill="#9e9468"/><rect x="22" y="1" width="1" height="16" fill="#9e9468"/><rect x="37" y="1" width="1" height="16" fill="#9e9468"/><rect x="52" y="1" width="1" height="16" fill="#9e9468"/><rect x="67" y="1" width="1" height="16" fill="#9e9468"/><rect x="82" y="1" width="1" height="16" fill="#9e9468"/><rect x="97" y="1" width="1" height="16" fill="#9e9468"/><rect x="112" y="1" width="1" height="16" fill="#9e9468"/><rect x="127" y="1" width="1" height="16" fill="#9e9468"/><rect x="3" y="16" width="1" height="1" fill="#3030c8"/><rect x="4" y="16" width="1" height="1" fill="#3030c8"/><rect x="9" y="16" width="1" height="1" fill="#3030c8"/><rect x="14" y="16" width="1" height="1" fill="#3030c8"/><rect x="17" y="16" width="1" height="1" fill="#3030c8"/><rect x="18" y="16" width="1" height="1" fill="#3030c8"/><rect x="21" y="16" width="1" height="1" fill="#3030c8"/><rect x="22" y="16" width="1" height="1" fill="#3030c8"/><rect x="24" y="16" width="1" height="1" fill="#3030c8"/><rect x="27" y="16" width="1" height="1" fill="#3030c8"/><rect x="28" y="16" width="1" height="1" fill="#3030c8"/><rect x="32" y="16" width="1" height="1" fill="#3030c8"/><rect x="34" y="16" width="1" height="1" fill="#3030c8"/><rect x="38" y="16" width="1" height="1" fill="#3030c8"/><rect x="43" y="16" width="1" height="1" fill="#3030c8"/><rect x="44" y="16" width="1" height="1" fill="#3030c8"/><rect x="48" y="16" width="1" height="1" fill="#3030c8"/><rect x="53" y="16" width="1" height="1" fill="#3030c8"/><rect x="56" y="16" width="1" height="1" fill="#3030c8"/><rect x="61" y="16" width="1" height="1" fill="#3030c8"/><rect x="62" y="16" width="1" height="1" fill="#3030c8"/><rect x="63" y="16" width="1" height="1" fill="#3030c8"/><rect x="68" y="16" width="1" height="1" fill="#3030c8"/><rect x="73" y="16" width="1" height="1" fill="#3030c8"/><rect x="78" y="16" width="1" height="1" fill="#3030c8"/><rect x="79" y="16" width="1" height="1" fill="#3030c8"/><rect x="82" y="16" width="1" height="1" fill="#3030c8"/><rect x="85" y="16" width="1" height="1" fill="#3030c8"/><rect x="89" y="16" width="1" height="1" fill="#3030c8"/><rect x="90" y="16" width="1" height="1" fill="#3030c8"/><rect x="94" y="16" width="1" height="1" fill="#3030c8"/><rect x="97" y="16" width="1" height="1" fill="#3030c8"/><rect x="104" y="16" width="1" height="1" fill="#3030c8"/><rect x="105" y="16" width="1" height="1" fill="#3030c8"/><rect x="106" y="16" width="1" height="1" fill="#3030c8"/><rect x="108" y="16" width="1" height="1" fill="#3030c8"/><rect x="112" y="16" width="1" height="1" fill="#3030c8"/><rect x="113" y="16" width="1" height="1" fill="#3030c8"/><rect x="115" y="16" width="1" height="1" fill="#3030c8"/><rect x="116" y="16" width="1" height="1" fill="#3030c8"/><rect x="119" y="16" width="1" height="1" fill="#3030c8"/><rect x="121" y="16" width="1" height="1" fill="#3030c8"/><rect x="123" y="16" width="1" height="1" fill="#3030c8"/><rect x="124" y="16" width="1" height="1" fill="#3030c8"/><rect x="129" y="16" width="1" height="1" fill="#3030c8"/><rect x="136" y="16" width="1" height="1" fill="#3030c8"/><rect x="7" y="18" width="1" height="16" fill="#9e9468"/><rect x="22" y="18" width="1" height="16" fill="#9e9468"/><rect x="37" y="18" width="1" height="16" fill="#9e9468"/><rect x="52" y="18" width="1" height="16" fill="#9e9468"/><rect x="67" y="18" width="1" height="16" fill="#9e9468"/><rect x="82" y="18" width="1" height="16" fill="#9e9468"/><rect x="97" y="18" width="1" height="16" fill="#9e9468"/><rect x="112" y="18" width="1" height="16" fill="#9e9468"/><rect x="127" y="18" width="1" height="16" fill="#9e9468"/><rect x="3" y="33" width="1" height="1" fill="#3030c8"/><rect x="4" y="33" width="1" height="1" fill="#3030c8"/><rect x="5" y="33" width="1" height="1" fill="#3030c8"/><rect x="6" y="33" width="1" height="1" fill="#3030c8"/><rect x="7" y="33" width="1" height="1" fill="#3030c8"/><rect x="13" y="33" width="1" height="1" fill="#3030c8"/><rect x="15" y="33" width="1" height="1" fill="#3030c8"/><rect x="16" y="33" width="1" height="1" fill="#3030c8"/><rect x="18" y="33" width="1" height="1" fill="#3030c8"/><rect x="23" y="33" width="1" height="1" fill="#3030c8"/><rect x="25" y="33" width="1" height="1" fill="#3030c8"/><rect x="28" y="33" width="1" height="1" fill="#3030c8"/><rect x="29" y="33" width="1" height="1" fill="#3030c8"/><rect x="30" y="33" width="1" height="1" fill="#3030c8"/><rect x="31" y="33" width="1" height="1" fill="#3030c8"/><rect x="35" y="33" width="1" height="1" fill="#3030c8"/><rect x="40" y="33" width="1" height="1" fill="#3030c8"/><rect x="41" y="33" width="1" height="1" fill="#3030c8"/><rect x="45" y="33" width="1" height="1" fill="#3030c8"/><rect x="48" y="33" width="1" height="1" fill="#3030c8"/><rect x="49" y="33" width="1" height="1" fill="#3030c8"/><rect x="50" y="33" width="1" height="1" fill="#3030c8"/><rect x="51" y="33" width="1" height="1" fill="#3030c8"/><rect x="53" y="33" width="1" height="1" fill="#3030c8"/><rect x="54" y="33" width="1" height="1" fill="#3030c8"/><rect x="55" y="33" width="1" height="1" fill="#3030c8"/><rect x="57" y="33" width="1" height="1" fill="#3030c8"/><rect x="59" y="33" width="1" height="1" fill="#3030c8"/><rect x="60" y="33" width="1" height="1" fill="#3030c8"/><rect x="62" y="33" width="1" height="1" fill="#3030c8"/><rect x="66" y="33" width="1" height="1" fill="#3030c8"/><rect x="68" y="33" width="1" height="1" fill="#3030c8"/><rect x="73" y="33" width="1" height="1" fill="#3030c8"/><rect x="77" y="33" width="1" height="1" fill="#3030c8"/><rect x="78" y="33" width="1" height="1" fill="#3030c8"/><rect x="79" y="33" width="1" height="1" fill="#3030c8"/><rect x="82" y="33" width="1" height="1" fill="#3030c8"/><rect x="84" y="33" width="1" height="1" fill="#3030c8"/><rect x="86" y="33" width="1" height="1" fill="#3030c8"/><rect x="87" y="33" width="1" height="1" fill="#3030c8"/><rect x="89" y="33" width="1" height="1" fill="#3030c8"/><rect x="90" y="33" width="1" height="1" fill="#3030c8"/><rect x="92" y="33" width="1" height="1" fill="#3030c8"/><rect x="94" y="33" width="1" height="1" fill="#3030c8"/><rect x="96" y="33" width="1" height="1" fill="#3030c8"/><rect x="99" y="33" width="1" height="1" fill="#3030c8"/><rect x="101" y="33" width="1" height="1" fill="#3030c8"/><rect x="102" y="33" width="1" height="1" fill="#3030c8"/><rect x="103" y="33" width="1" height="1" fill="#3030c8"/><rect x="104" y="33" width="1" height="1" fill="#3030c8"/><rect x="108" y="33" width="1" height="1" fill="#3030c8"/><rect x="109" y="33" width="1" height="1" fill="#3030c8"/><rect x="111" y="33" width="1" height="1" fill="#3030c8"/><rect x="113" y="33" width="1" height="1" fill="#3030c8"/><rect x="115" y="33" width="1" height="1" fill="#3030c8"/><rect x="117" y="33" width="1" height="1" fill="#3030c8"/><rect x="118" y="33" width="1" height="1" fill="#3030c8"/><rect x="119" y="33" width="1" height="1" fill="#3030c8"/><rect x="122" y="33" width="1" height="1" fill="#3030c8"/><rect x="125" y="33" width="1" height="1" fill="#3030c8"/><rect x="127" y="33" width="1" height="1" fill="#3030c8"/><rect x="128" y="33" width="1" height="1" fill="#3030c8"/><rect x="131" y="33" width="1" height="1" fill="#3030c8"/><rect x="132" y="33" width="1" height="1" fill="#3030c8"/><rect x="133" y="33" width="1" height="1" fill="#3030c8"/><rect x="136" y="33" width="1" height="1" fill="#3030c8"/><rect x="7" y="36" width="1" height="16" fill="#9e9468"/><rect x="22" y="36" width="1" height="16" fill="#9e9468"/><rect x="37" y="36" width="1" height="16" fill="#9e9468"/><rect x="52" y="36" width="1" height="16" fill="#9e9468"/><rect x="67" y="36" width="1" height="16" fill="#9e9468"/><rect x="82" y="36" width="1" height="16" fill="#9e9468"/><rect x="97" y="36" width="1" height="16" fill="#9e9468"/><rect x="112" y="36" width="1" height="16" fill="#9e9468"/><rect x="127" y="36" width="1" height="16" fill="#9e9468"/><rect x="7" y="53" width="1" height="16" fill="#9e9468"/><rect x="22" y="53" width="1" height="16" fill="#9e9468"/><rect x="37" y="53" width="1" height="16" fill="#9e9468"/><rect x="52" y="53" width="1" height="16" fill="#9e9468"/><rect x="67" y="53" width="1" height="16" fill="#9e9468"/><rect x="82" y="53" width="1" height="16" fill="#9e9468"/><rect x="97" y="53" width="1" height="16" fill="#9e9468"/><rect x="112" y="53" width="1" height="16" fill="#9e9468"/><rect x="127" y="53" width="1" height="16" fill="#9e9468"/></svg><svg style="position:absolute;left:734px;top:535px" width="141" height="70" shape-rendering="crispEdges"><rect x="7" y="1" width="1" height="16" fill="#9e9468"/><rect x="22" y="1" width="1" height="16" fill="#9e9468"/><rect x="37" y="1" width="1" height="16" fill="#9e9468"/><rect x="52" y="1" width="1" height="16" fill="#9e9468"/><rect x="67" y="1" width="1" height="16" fill="#9e9468"/><rect x="82" y="1" width="1" height="16" fill="#9e9468"/><rect x="97" y="1" width="1" height="16" fill="#9e9468"/><rect x="112" y="1" width="1" height="16" fill="#9e9468"/><rect x="127" y="1" width="1" height="16" fill="#9e9468"/><rect x="0" y="16" width="1" height="1" fill="#f04020"/><rect x="4" y="16" width="1" height="1" fill="#00e000"/><rect x="8" y="16" width="1" height="1" fill="#f04020"/><rect x="13" y="16" width="1" height="1" fill="#f04020"/><rect x="17" y="16" width="1" height="1" fill="#f04020"/><rect x="19" y="16" width="1" height="1" fill="#00e000"/><rect x="21" y="16" width="1" height="1" fill="#f04020"/><rect x="24" y="16" width="1" height="1" fill="#f04020"/><rect x="31" y="16" width="1" height="1" fill="#f04020"/><rect x="37" y="16" width="1" height="1" fill="#f04020"/><rect x="38" y="16" width="1" height="1" fill="#00e000"/><rect x="39" y="16" width="1" height="1" fill="#00e000"/><rect x="41" y="16" width="1" height="1" fill="#00e000"/><rect x="43" y="16" width="1" height="1" fill="#00e000"/><rect x="48" y="16" width="1" height="1" fill="#f04020"/><rect x="50" y="16" width="1" height="1" fill="#00e000"/><rect x="54" y="16" width="1" height="1" fill="#00e000"/><rect x="55" y="16" width="1" height="1" fill="#f04020"/><rect x="57" y="16" width="1" height="1" fill="#f04020"/><rect x="59" y="16" width="1" height="1" fill="#f04020"/><rect x="69" y="16" width="1" height="1" fill="#00e000"/><rect x="76" y="16" width="1" height="1" fill="#f04020"/><rect x="79" y="16" width="1" height="1" fill="#00e000"/><rect x="83" y="16" width="1" height="1" fill="#00e000"/><rect x="85" y="16" width="1" height="1" fill="#00e000"/><rect x="93" y="16" width="1" height="1" fill="#f04020"/><rect x="107" y="16" width="1" height="1" fill="#f04020"/><rect x="113" y="16" width="1" height="1" fill="#00e000"/><rect x="114" y="16" width="1" height="1" fill="#00e000"/><rect x="117" y="16" width="1" height="1" fill="#00e000"/><rect x="123" y="16" width="1" height="1" fill="#f04020"/><rect x="129" y="16" width="1" height="1" fill="#00e000"/><rect x="133" y="16" width="1" height="1" fill="#00e000"/><rect x="135" y="16" width="1" height="1" fill="#f04020"/><rect x="12" y="15" width="1" height="1" fill="#00e000"/><rect x="14" y="14" width="1" height="2" fill="#00e000"/><rect x="17" y="14" width="1" height="2" fill="#00e000"/><rect x="20" y="13" width="1" height="3" fill="#00e000"/><rect x="23" y="15" width="1" height="1" fill="#00e000"/><rect x="25" y="14" width="1" height="2" fill="#00e000"/><rect x="9" y="16" width="1" height="1" fill="#00e000"/><rect x="11" y="16" width="1" height="1" fill="#00e000"/><rect x="12" y="16" width="1" height="1" fill="#00e000"/><rect x="14" y="16" width="1" height="1" fill="#00e000"/><rect x="17" y="16" width="1" height="1" fill="#00e000"/><rect x="18" y="16" width="1" height="1" fill="#f04020"/><rect x="22" y="16" width="1" height="1" fill="#f04020"/><rect x="25" y="16" width="1" height="1" fill="#f04020"/><rect x="28" y="16" width="1" height="1" fill="#f04020"/><rect x="29" y="16" width="1" height="1" fill="#f04020"/><rect x="30" y="16" width="1" height="1" fill="#00e000"/><rect x="32" y="16" width="1" height="1" fill="#00e000"/><rect x="36" y="16" width="1" height="1" fill="#00e000"/><rect x="37" y="16" width="1" height="1" fill="#f04020"/><rect x="38" y="16" width="1" height="1" fill="#00e000"/><rect x="39" y="16" width="1" height="1" fill="#00e000"/><rect x="7" y="18" width="1" height="16" fill="#9e9468"/><rect x="22" y="18" width="1" height="16" fill="#9e9468"/><rect x="37" y="18" width="1" height="16" fill="#9e9468"/><rect x="52" y="18" width="1" height="16" fill="#9e9468"/><rect x="67" y="18" width="1" height="16" fill="#9e9468"/><rect x="82" y="18" width="1" height="16" fill="#9e9468"/><rect x="97" y="18" width="1" height="16" fill="#9e9468"/><rect x="112" y="18" width="1" height="16" fill="#9e9468"/><rect x="127" y="18" width="1" height="16" fill="#9e9468"/><rect x="7" y="36" width="1" height="16" fill="#9e9468"/><rect x="22" y="36" width="1" height="16" fill="#9e9468"/><rect x="37" y="36" width="1" height="16" fill="#9e9468"/><rect x="52" y="36" width="1" height="16" fill="#9e9468"/><rect x="67" y="36" width="1" height="16" fill="#9e9468"/><rect x="82" y="36" width="1" height="16" fill="#9e9468"/><rect x="97" y="36" width="1" height="16" fill="#9e9468"/><rect x="112" y="36" width="1" height="16" fill="#9e9468"/><rect x="127" y="36" width="1" height="16" fill="#9e9468"/><rect x="5" y="51" width="1" height="1" fill="#00e000"/><rect x="6" y="51" width="1" height="1" fill="#f04020"/><rect x="8" y="51" width="1" height="1" fill="#f04020"/><rect x="13" y="51" width="1" height="1" fill="#00e000"/><rect x="15" y="51" width="1" height="1" fill="#00e000"/><rect x="32" y="51" width="1" height="1" fill="#00e000"/><rect x="45" y="51" width="1" height="1" fill="#00e000"/><rect x="49" y="51" width="1" height="1" fill="#f04020"/><rect x="55" y="51" width="1" height="1" fill="#00e000"/><rect x="58" y="51" width="1" height="1" fill="#00e000"/><rect x="64" y="51" width="1" height="1" fill="#00e000"/><rect x="68" y="51" width="1" height="1" fill="#00e000"/><rect x="72" y="51" width="1" height="1" fill="#00e000"/><rect x="80" y="51" width="1" height="1" fill="#00e000"/><rect x="82" y="51" width="1" height="1" fill="#00e000"/><rect x="83" y="51" width="1" height="1" fill="#f04020"/><rect x="87" y="51" width="1" height="1" fill="#00e000"/><rect x="92" y="51" width="1" height="1" fill="#00e000"/><rect x="93" y="51" width="1" height="1" fill="#f04020"/><rect x="98" y="51" width="1" height="1" fill="#f04020"/><rect x="103" y="51" width="1" height="1" fill="#00e000"/><rect x="114" y="51" width="1" height="1" fill="#00e000"/><rect x="116" y="51" width="1" height="1" fill="#00e000"/><rect x="120" y="51" width="1" height="1" fill="#00e000"/><rect x="122" y="51" width="1" height="1" fill="#f04020"/><rect x="125" y="51" width="1" height="1" fill="#f04020"/><rect x="128" y="51" width="1" height="1" fill="#00e000"/><rect x="131" y="51" width="1" height="1" fill="#00e000"/><rect x="133" y="51" width="1" height="1" fill="#00e000"/><rect x="136" y="51" width="1" height="1" fill="#f04020"/><rect x="137" y="51" width="1" height="1" fill="#00e000"/><rect x="139" y="51" width="1" height="1" fill="#00e000"/><rect x="96" y="44" width="1" height="7" fill="#00e000"/><rect x="97" y="48" width="1" height="3" fill="#00e000"/><rect x="12" y="51" width="1" height="1" fill="#f04020"/><rect x="14" y="51" width="1" height="1" fill="#f04020"/><rect x="15" y="51" width="1" height="1" fill="#f04020"/><rect x="16" y="51" width="1" height="1" fill="#f04020"/><rect x="17" y="51" width="1" height="1" fill="#f04020"/><rect x="19" y="51" width="1" height="1" fill="#f04020"/><rect x="20" y="51" width="1" height="1" fill="#f04020"/><rect x="21" y="51" width="1" height="1" fill="#f04020"/><rect x="22" y="51" width="1" height="1" fill="#f04020"/><rect x="23" y="51" width="1" height="1" fill="#f04020"/><rect x="24" y="51" width="1" height="1" fill="#f04020"/><rect x="26" y="51" width="1" height="1" fill="#f04020"/><rect x="27" y="51" width="1" height="1" fill="#f04020"/><rect x="28" y="51" width="1" height="1" fill="#f04020"/><rect x="29" y="51" width="1" height="1" fill="#f04020"/><rect x="7" y="53" width="1" height="16" fill="#9e9468"/><rect x="22" y="53" width="1" height="16" fill="#9e9468"/><rect x="37" y="53" width="1" height="16" fill="#9e9468"/><rect x="52" y="53" width="1" height="16" fill="#9e9468"/><rect x="67" y="53" width="1" height="16" fill="#9e9468"/><rect x="82" y="53" width="1" height="16" fill="#9e9468"/><rect x="97" y="53" width="1" height="16" fill="#9e9468"/><rect x="112" y="53" width="1" height="16" fill="#9e9468"/><rect x="127" y="53" width="1" height="16" fill="#9e9468"/><rect x="11" y="67" width="1" height="1" fill="#f04020"/><rect x="14" y="67" width="1" height="1" fill="#f04020"/><rect x="128" y="67" width="1" height="1" fill="#f04020"/></svg><div class="btn ok" style="left:14px;width:61px"><span class="bl" style="width:43px"><span style="display:inline-block;transform:scaleX(0.923)">OK</span></span><span class="sep"></span><span class="tri"></span></div><div class="btn" style="left:79px;width:64px"><span class="bl" style="width:46px"><span style="display:inline-block;transform:scaleX(0.928)">Copy</span></span><span class="sep"></span><span class="tri"></span></div><div class="btn" style="left:147px;width:74px"><span class="bl" style="width:56px"><span style="display:inline-block;transform:scaleX(1.027)">Windows</span></span><span class="sep"></span><span class="tri"></span></div><div class="btn" style="left:226px;width:74px"><span class="bl" style="width:56px"><span style="display:inline-block;transform:scaleX(0.970)">Machine</span></span><span class="sep"></span><span class="tri"></span></div><div class="btn" style="left:305px;width:71px"><span class="bl" style="width:53px"><span style="display:inline-block;transform:scaleX(0.970)">Status</span></span><span class="sep"></span><span class="tri"></span></div><div class="btn" style="left:380px;width:75px"><span class="bl" style="width:57px"><span style="display:inline-block;transform:scaleX(0.924)">USB Bus</span></span><span class="sep"></span><span class="tri"></span></div><div class="btn" style="left:459px;width:74px"><span class="bl" style="width:56px"><span style="display:inline-block;transform:scaleX(0.977)">Network</span></span><span class="sep"></span><span class="tri"></span></div><div class="btn" style="left:538px;width:60px"><span class="bl" style="width:42px"><span style="display:inline-block;transform:scaleX(0.892)">SPD</span></span><span class="sep"></span><span class="tri"></span></div><div class="btn" style="left:602px;width:74px"><span class="bl" style="width:56px"><span style="display:inline-block;transform:scaleX(0.964)">Volumes</span></span><span class="sep"></span><span class="tri"></span></div><div class="btn" style="left:681px;width:74px"><span class="bl" style="width:56px"><span style="display:inline-block;transform:scaleX(0.979)">Adapters</span></span><span class="sep"></span><span class="tri"></span></div><div class="btn" style="left:760px;width:74px"><span class="bl" style="width:56px"><span style="display:inline-block;transform:scaleX(0.931)">PCI Bus</span></span><span class="sep"></span><span class="tri"></span></div><div class="btn" style="left:839px;width:67px"><span class="bl" style="width:49px"><span style="display:inline-block;transform:scaleX(1.020)">About</span></span><span class="sep"></span><span class="tri"></span></div><div class="btn" style="left:911px;width:63px"><span class="bl" style="width:45px"><span style="display:inline-block;transform:scaleX(0.972)">Help</span></span><span class="sep"></span><span class="tri"></span></div><div class="pb" style="left:455px;top:51px;width:159px;height:13px;line-height:13px"><span style="display:inline-block;transform:scaleX(0.979)">1.88GHz Ouad DDR3 RAM</span></div><div class="pb" style="left:539px;top:379px;width:117px;height:14px;line-height:14px"><span style="display:inline-block;transform:scaleX(0.981)">Cache-0 Latency</span></div><div class="pb" style="left:700px;top:379px;width:158px;height:13px;line-height:13px"><span style="display:inline-block;transform:scaleX(0.948)">MMX SSE4.2 XD SMX AVX</span></div>
</body></html>
